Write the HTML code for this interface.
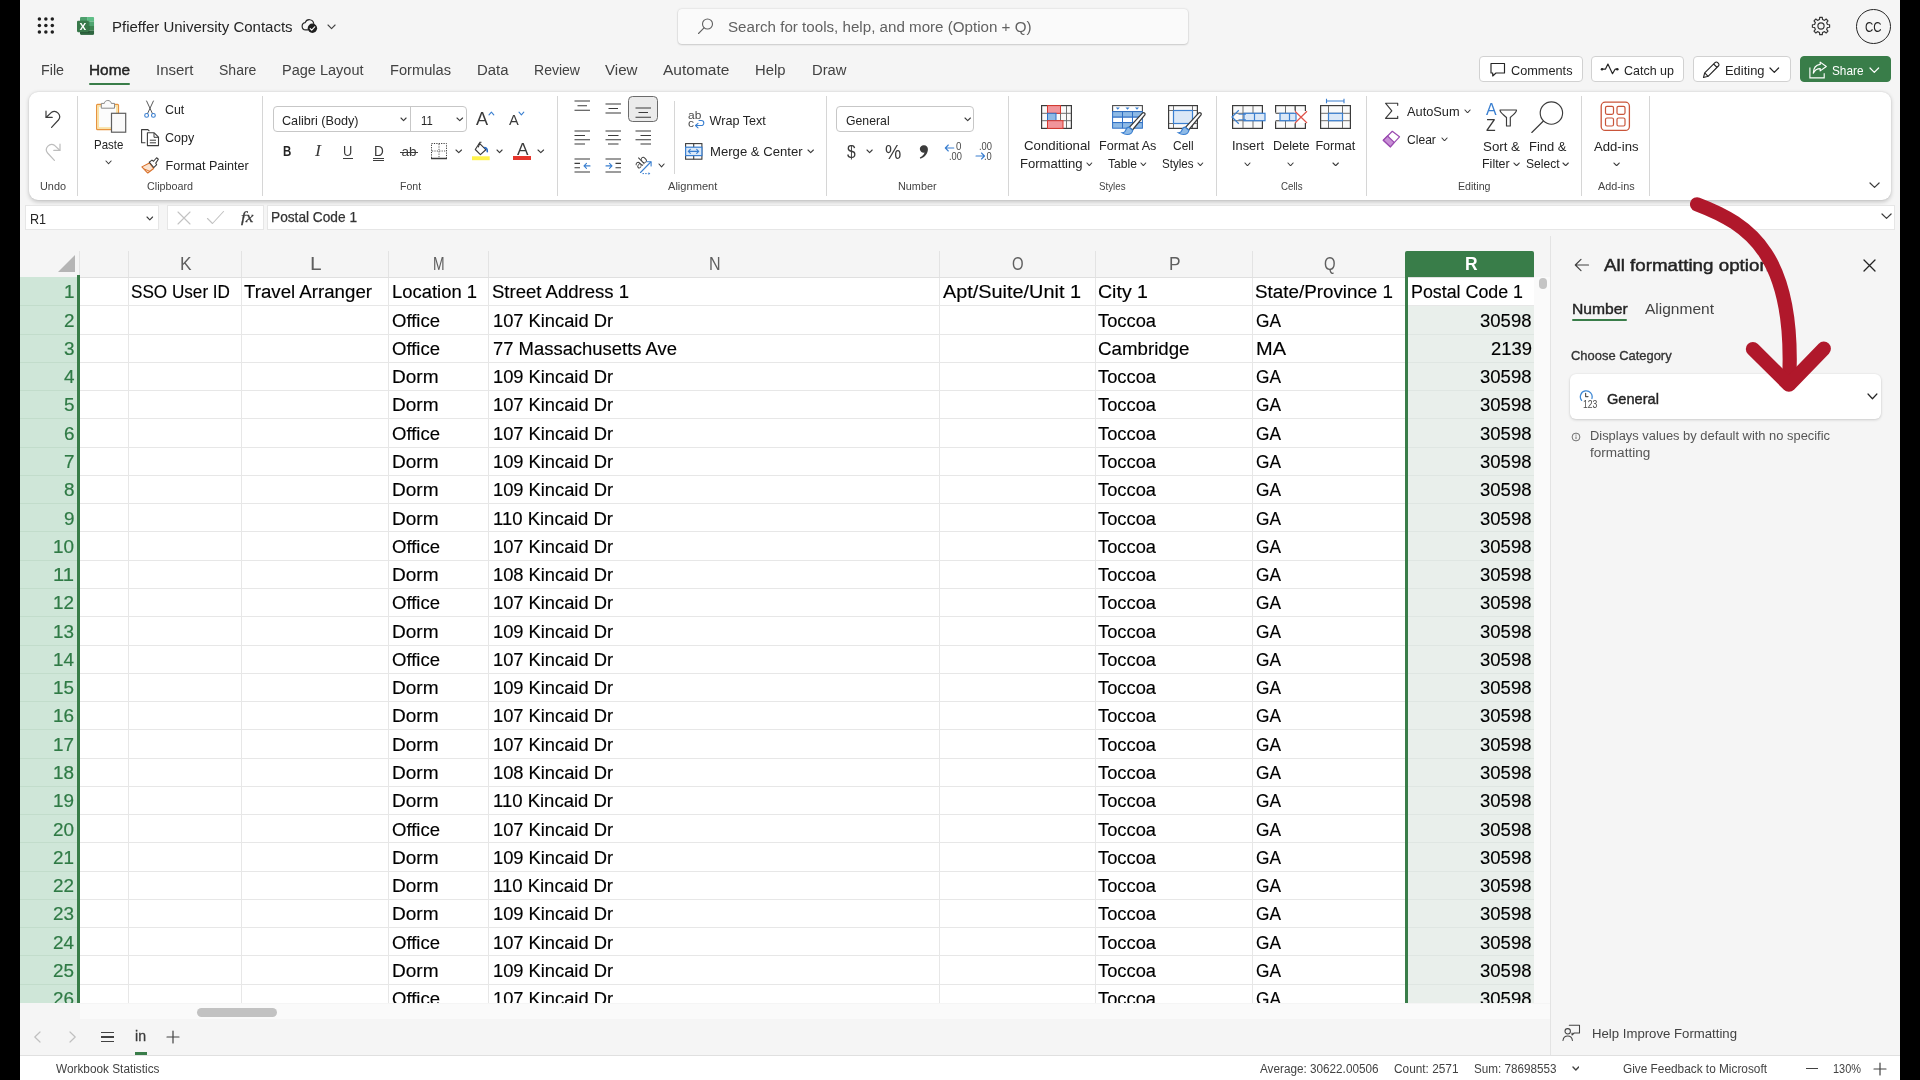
<!DOCTYPE html>
<html lang="en"><head><meta charset="utf-8"><title>Pfieffer University Contacts - Excel</title>
<style>
html,body{margin:0;padding:0;}
body{width:1920px;height:1080px;overflow:hidden;background:#f5f5f5;position:relative;font-family:"Liberation Sans",sans-serif;}
#app{position:absolute;left:0;top:0;width:1920px;height:1080px;overflow:hidden;will-change:transform;}
.a{position:absolute;box-sizing:border-box;display:block;}
.t{position:absolute;white-space:pre;transform-origin:0 50%;}
.sf{font-family:"Liberation Serif",serif;}
</style></head><body><div id="app">
<div class="a " style="left:0px;top:0px;width:20px;height:1080px;background:#000;"></div>
<div class="a " style="left:1900px;top:0px;width:20px;height:1080px;background:#000;"></div>
<svg class="a" style="left:37px;top:17px;" width="18" height="18" viewBox="0 0 18 18"><circle cx="2.40" cy="1.90" r="1.750" fill="#1f1f1f"/><circle cx="2.40" cy="8.45" r="1.750" fill="#1f1f1f"/><circle cx="2.40" cy="15.00" r="1.750" fill="#1f1f1f"/><circle cx="8.85" cy="1.90" r="1.750" fill="#1f1f1f"/><circle cx="8.85" cy="8.45" r="1.750" fill="#1f1f1f"/><circle cx="8.85" cy="15.00" r="1.750" fill="#1f1f1f"/><circle cx="15.30" cy="1.90" r="1.750" fill="#1f1f1f"/><circle cx="15.30" cy="8.45" r="1.750" fill="#1f1f1f"/><circle cx="15.30" cy="15.00" r="1.750" fill="#1f1f1f"/></svg>
<svg class="a" style="left:76px;top:16px;" width="20" height="20" viewBox="0 0 20 20">
<clipPath id="xlc"><rect x="4" y="1" width="14.200" height="17.900" rx="1.300"/></clipPath>
<g clip-path="url(#xlc)">
<rect x="4" y="1" width="7.100" height="4.500" fill="#4d9f6c"/><rect x="11.100" y="1" width="7.100" height="4.500" fill="#5fbe86"/>
<rect x="4" y="5.500" width="7.100" height="4.500" fill="#3c8350"/><rect x="11.100" y="5.500" width="7.100" height="4.500" fill="#4fa570"/>
<rect x="4" y="10" width="7.100" height="4.500" fill="#2f6a41"/><rect x="11.100" y="10" width="7.100" height="4.500" fill="#3d8552"/>
<rect x="4" y="14.500" width="14.200" height="4.400" fill="#2e6640"/>
<rect x="4" y="4.700" width="9.600" height="12.300" fill="#000" opacity="0.18"/>
</g>
<rect x="1" y="4.700" width="11.700" height="11.500" rx="1.100" fill="#38784a"/>
<path d="M3.700 7.100h1.750l1.450 2.450 1.500-2.450h1.650L7.800 10.400l2.300 3.500H8.300L6.850 11.500 5.400 13.900H3.650L5.950 10.400z" fill="#fff"/>
</svg>
<span class="t" style="left:112.00px;top:19px;font-size:15px;line-height:15px;color:#242424;">Pfieffer University Contacts</span>
<svg class="a" style="left:301px;top:18px;" width="18" height="16" viewBox="0 0 18 16">
<path d="M6.800 11.900H4.600A3.650 3.650 0 0 1 4.200 4.650A4.400 4.400 0 0 1 12.700 5.400" fill="none" stroke="#242424" stroke-width="1.150" stroke-linecap="round" stroke-linejoin="round"/>
<circle cx="11.400" cy="10.200" r="4.700" fill="#1f1f1f"/>
<path d="M9.200 10.600l1.500 1.500 3-3.300" fill="none" stroke="#fff" stroke-width="1.150" stroke-linecap="round" stroke-linejoin="round"/>
</svg>
<svg class="a" style="left:327.05px;top:24.0px;" width="9.1" height="5.55" viewBox="0 0 9.1 5.55"><path d="M1 1 L4.55 4.55 L8.10 1" fill="none" stroke="#424242" stroke-width="1.1" stroke-linecap="round" stroke-linejoin="round"/></svg>
<div class="a " style="left:678px;top:9px;width:510px;height:35px;background:#fafafa;border-radius:4px;box-shadow:0 0 2px rgba(0,0,0,.18),0 1px 2px rgba(0,0,0,.14);"></div>
<svg class="a" style="left:697px;top:17px;" width="18" height="18" viewBox="0 0 18 18"><circle cx="10.5" cy="7" r="5" fill="none" stroke="#616161" stroke-width="1.1"/><path d="M7 10.8 L1.5 16.5" stroke="#616161" stroke-width="1.1" stroke-linecap="round"/></svg>
<span class="t" style="left:728.30px;top:19px;font-size:15.5px;line-height:15.5px;color:#616161;transform:scaleX(0.9772);">Search for tools, help, and more (Option + Q)</span>
<svg class="a" style="left:1811px;top:16px;" width="20" height="20" viewBox="0 0 20 20"><g fill="none" stroke="#333" stroke-width="1.15" stroke-linejoin="round"><path d="M16.43 8.50 L18.60 8.70 L18.60 11.30 L16.43 11.50 L15.61 13.48 L17.00 15.16 L15.16 17.00 L13.48 15.61 L11.50 16.43 L11.30 18.60 L8.70 18.60 L8.50 16.43 L6.52 15.61 L4.84 17.00 L3.00 15.16 L4.39 13.48 L3.57 11.50 L1.40 11.30 L1.40 8.70 L3.57 8.50 L4.39 6.52 L3.00 4.84 L4.84 3.00 L6.52 4.39 L8.50 3.57 L8.70 1.40 L11.30 1.40 L11.50 3.57 L13.48 4.39 L15.16 3.00 L17.00 4.84 L15.61 6.52 Z"/><circle cx="10" cy="10" r="3.1"/></g></svg>
<div class="a " style="left:1856px;top:9px;width:35px;height:35px;border:1.4px solid #242424;border-radius:50%;"></div>
<span class="t" style="left:1865.00px;top:20px;font-size:14px;line-height:14px;color:#242424;transform:scaleX(0.8154);">CC</span>
<span class="t" style="left:41.00px;top:62px;font-size:15.5px;line-height:15.5px;color:#424242;transform:scaleX(0.9206);">File</span>
<span class="t" style="left:89.00px;top:62px;font-size:15.5px;line-height:15.5px;color:#242424;-webkit-text-stroke:0.45px #242424;transform:scaleX(0.9913);">Home</span>
<span class="t" style="left:155.50px;top:62px;font-size:15.5px;line-height:15.5px;color:#424242;transform:scaleX(0.9674);">Insert</span>
<span class="t" style="left:218.60px;top:62px;font-size:15.5px;line-height:15.5px;color:#424242;transform:scaleX(0.9039);">Share</span>
<span class="t" style="left:282.00px;top:62px;font-size:15.5px;line-height:15.5px;color:#424242;transform:scaleX(0.9363);">Page Layout</span>
<span class="t" style="left:390.00px;top:62px;font-size:15.5px;line-height:15.5px;color:#424242;transform:scaleX(0.9441);">Formulas</span>
<span class="t" style="left:476.50px;top:62px;font-size:15.5px;line-height:15.5px;color:#424242;transform:scaleX(0.9618);">Data</span>
<span class="t" style="left:533.50px;top:62px;font-size:15.5px;line-height:15.5px;color:#424242;transform:scaleX(0.9050);">Review</span>
<span class="t" style="left:605.00px;top:62px;font-size:15.5px;line-height:15.5px;color:#424242;transform:scaleX(0.9752);">View</span>
<span class="t" style="left:663.00px;top:62px;font-size:15.5px;line-height:15.5px;color:#424242;">Automate</span>
<span class="t" style="left:755.00px;top:62px;font-size:15.5px;line-height:15.5px;color:#424242;transform:scaleX(0.9564);">Help</span>
<span class="t" style="left:811.50px;top:62px;font-size:15.5px;line-height:15.5px;color:#424242;transform:scaleX(0.9538);">Draw</span>
<div class="a " style="left:89px;top:82.5px;width:41px;height:2.5px;background:#397d49;border-radius:1.5px;"></div>
<div class="a " style="left:1479px;top:56.3px;width:103.5px;height:26.1px;background:#fff;border:1px solid #d1d1d1;border-radius:4px;"></div>
<div class="a " style="left:1591px;top:56.3px;width:92.5px;height:26.1px;background:#fff;border:1px solid #d1d1d1;border-radius:4px;"></div>
<div class="a " style="left:1693px;top:56.3px;width:98px;height:26.1px;background:#fff;border:1px solid #d1d1d1;border-radius:4px;"></div>
<div class="a " style="left:1800px;top:56.3px;width:91px;height:26.1px;background:#397d49;border:1px solid #397d49;border-radius:4px;"></div>
<svg class="a" style="left:1489px;top:61px;" width="18" height="18" viewBox="0 0 18 18"><path d="M2 2.5h13.5v9.5H7l-3.3 3v-3H2z" fill="none" stroke="#242424" stroke-width="1.15" stroke-linejoin="round"/></svg>
<span class="t" style="left:1511.00px;top:64px;font-size:13.5px;line-height:13.5px;color:#242424;transform:scaleX(0.9423);">Comments</span>
<svg class="a" style="left:1599px;top:62px;" width="21" height="16" viewBox="0 0 21 16"><path d="M3.400 7.200h3l2.500-5.100 4.600 9.600 2.600-4.500h1.800" fill="none" stroke="#242424" stroke-width="1.200" stroke-linecap="round" stroke-linejoin="round"/><circle cx="3" cy="7.200" r="1.250" fill="#242424"/><circle cx="18.300" cy="7.200" r="1.250" fill="#242424"/></svg>
<span class="t" style="left:1623.50px;top:64px;font-size:13.5px;line-height:13.5px;color:#242424;transform:scaleX(0.9251);">Catch up</span>
<svg class="a" style="left:1701px;top:60px;" width="20" height="20" viewBox="0 0 20 20"><path d="M2.5 17.5l1.2-4.6L14 2.6a1.9 1.9 0 0 1 2.7 0l.7.7a1.9 1.9 0 0 1 0 2.7L7.1 16.3z M12.6 4l3.4 3.4 M3.7 12.9l3.4 3.4" fill="none" stroke="#242424" stroke-width="1.1" stroke-linejoin="round" stroke-linecap="round"/></svg>
<span class="t" style="left:1724.50px;top:64px;font-size:13.5px;line-height:13.5px;color:#242424;transform:scaleX(0.9569);">Editing</span>
<svg class="a" style="left:1769.45px;top:66.8px;" width="10.6" height="6.45" viewBox="0 0 10.6 6.45"><path d="M1 1 L5.30 5.45 L9.60 1" fill="none" stroke="#242424" stroke-width="1.2" stroke-linecap="round" stroke-linejoin="round"/></svg>
<svg class="a" style="left:1809px;top:60px;" width="20" height="20" viewBox="0 0 20 20"><path d="M0.900 7.600V17.800H15.200V13.200" fill="none" stroke="#fff" stroke-width="1.150" stroke-linejoin="miter"/><path d="M11.200 2.100L17.300 6.500 11.200 10.900V8.600C8 8.600 5.800 10 4.300 13.200 4.400 8.500 7 5 11.200 4.400z" fill="none" stroke="#fff" stroke-width="1.150" stroke-linejoin="round"/></svg>
<span class="t" style="left:1832.00px;top:64px;font-size:13.5px;line-height:13.5px;color:#fff;transform:scaleX(0.8742);">Share</span>
<svg class="a" style="left:1868.95px;top:66.8px;" width="10.6" height="6.45" viewBox="0 0 10.6 6.45"><path d="M1 1 L5.30 5.45 L9.60 1" fill="none" stroke="#fff" stroke-width="1.2" stroke-linecap="round" stroke-linejoin="round"/></svg>
<div class="a " style="left:28.5px;top:91.5px;width:1862.5px;height:108px;background:#fff;border-radius:9px;box-shadow:0 1.5px 4px rgba(0,0,0,.2),0 0 2px rgba(0,0,0,.1);"></div>
<div class="a " style="left:77.0px;top:96px;width:1px;height:100px;background:#d6d6d6;"></div>
<div class="a " style="left:262.1px;top:96px;width:1px;height:100px;background:#d6d6d6;"></div>
<div class="a " style="left:557.1px;top:96px;width:1px;height:100px;background:#d6d6d6;"></div>
<div class="a " style="left:826.1px;top:96px;width:1px;height:100px;background:#d6d6d6;"></div>
<div class="a " style="left:1007.9px;top:96px;width:1px;height:100px;background:#d6d6d6;"></div>
<div class="a " style="left:1215.8px;top:96px;width:1px;height:100px;background:#d6d6d6;"></div>
<div class="a " style="left:1366.1px;top:96px;width:1px;height:100px;background:#d6d6d6;"></div>
<div class="a " style="left:1581.1px;top:96px;width:1px;height:100px;background:#d6d6d6;"></div>
<div class="a " style="left:1649.0px;top:96px;width:1px;height:100px;background:#d6d6d6;"></div>
<div class="a " style="left:673.5px;top:100.5px;width:1px;height:73px;background:#d6d6d6;"></div>
<svg class="a" style="left:44px;top:109px;" width="18" height="20" viewBox="0 0 18 20"><path d="M2 2.2v6.2h6.2" fill="none" stroke="#3b3b3b" stroke-width="1.2" stroke-linecap="round" stroke-linejoin="round"/><path d="M2.3 8.2 L7.2 3.6 a5.2 5.2 0 0 1 7.2 7.4 L7.6 18.4" fill="none" stroke="#3b3b3b" stroke-width="1.2" stroke-linecap="round" stroke-linejoin="round"/></svg>
<svg class="a" style="left:44px;top:141.5px;" width="18" height="20" viewBox="0 0 18 20"><g transform="translate(18,0) scale(-1,1)"><path d="M2 2.2v6.2h6.2" fill="none" stroke="#bdbdbd" stroke-width="1.2" stroke-linecap="round" stroke-linejoin="round"/><path d="M2.3 8.2 L7.2 3.6 a5.2 5.2 0 0 1 7.2 7.4 L7.6 18.4" fill="none" stroke="#bdbdbd" stroke-width="1.2" stroke-linecap="round" stroke-linejoin="round"/></g></svg>
<span class="t" style="left:40.00px;top:181px;font-size:11.5px;line-height:11.5px;color:#444;transform:scaleX(0.9455);">Undo</span>
<svg class="a" style="left:95px;top:99px;" width="33" height="35" viewBox="0 0 33 35">
<rect x="1.700" y="5.500" width="21.700" height="25" rx="0.800" fill="#fcfcfc" stroke="#e7933f" stroke-width="1.400"/>
<rect x="3.200" y="7" width="18.700" height="22" fill="none" stroke="#fae2a4" stroke-width="1.700"/>
<path d="M6.300 9.200V4.400h3c.2-1.800 1.600-2.900 3.500-2.900s3.300 1.100 3.500 2.900h3.200v4.800z" fill="#fafafa" stroke="#8a8a8a" stroke-width="1"/>
<rect x="16.500" y="14.300" width="14.200" height="18.900" fill="#fafafa" stroke="#5e5e5e" stroke-width="1.200"/>
</svg>
<span class="t" style="left:93.80px;top:139px;font-size:12.6px;line-height:12.6px;color:#242424;transform:scaleX(0.9125);">Paste</span>
<svg class="a" style="left:105.45px;top:160.3px;" width="7.1" height="4.75" viewBox="0 0 7.1 4.75"><path d="M1 1 L3.55 3.75 L6.10 1" fill="none" stroke="#3b3b3b" stroke-width="1.1" stroke-linecap="round" stroke-linejoin="round"/></svg>
<svg class="a" style="left:143px;top:100px;" width="14" height="19" viewBox="0 0 14 19"><path d="M3.6 1 L9.400 13.500 M10.400 1 L4.600 13.500" stroke="#505050" stroke-width="0.950" stroke-linecap="round" fill="none"/><circle cx="3.6" cy="15.400" r="1.900" fill="none" stroke="#3a7fd0" stroke-width="1.100"/><circle cx="10.400" cy="15.400" r="1.900" fill="none" stroke="#3a7fd0" stroke-width="1.100"/></svg>
<span class="t" style="left:165.20px;top:104px;font-size:12.6px;line-height:12.6px;color:#242424;transform:scaleX(0.9842);">Cut</span>
<svg class="a" style="left:140px;top:128px;" width="20" height="19" viewBox="0 0 20 19"><path d="M5.400 14.800H1.600V1.600h6.300l1.500 1.500" fill="none" stroke="#3b3b3b" stroke-width="1.100" stroke-linejoin="round"/><path d="M7.400 4.800h6.800l4.300 4.300v8.500H7.400z" fill="#fff" stroke="#3b3b3b" stroke-width="1.100" stroke-linejoin="round"/><path d="M14 5v4.300h4.300" fill="none" stroke="#3b3b3b" stroke-width="1"/><path d="M9.800 12.200h6.200M9.800 14.800h6.200" stroke="#3b3b3b" stroke-width="1"/></svg>
<span class="t" style="left:165.20px;top:132px;font-size:12.6px;line-height:12.6px;color:#242424;transform:scaleX(0.9930);">Copy</span>
<svg class="a" style="left:140px;top:156px;" width="21" height="19" viewBox="0 0 21 19"><g transform="translate(0.400,0.300) scale(0.920)">
<path d="M1.600 11.500l8.200-4.300 4.600 6-6.400 5z" fill="#fbe3cf" stroke="#d8702a" stroke-width="1.200" stroke-linejoin="round"/>
<path d="M4.200 13.800l6.300 2.600" stroke="#d8702a" stroke-width="1" fill="none"/>
<path d="M9.600 6.400l3-2.300 1.700 1.300 3.300-3.800 1.900 1.600-2.800 4.200 1 1.700-3.200 3.100z" fill="#fff" stroke="#3b3b3b" stroke-width="1.150" stroke-linejoin="round"/></g>
</svg>
<span class="t" style="left:165.50px;top:160px;font-size:12.6px;line-height:12.6px;color:#242424;">Format Painter</span>
<span class="t" style="left:146.90px;top:181px;font-size:11.5px;line-height:11.5px;color:#444;transform:scaleX(0.9363);">Clipboard</span>
<div class="a " style="left:272.5px;top:106.4px;width:194px;height:25.4px;background:#fff;border:1px solid #c7c7c7;border-radius:4px;"></div>
<div class="a " style="left:410px;top:107px;width:1px;height:24px;background:#c7c7c7;"></div>
<span class="t" style="left:281.90px;top:114px;font-size:13px;line-height:13px;color:#242424;transform:scaleX(0.9714);">Calibri (Body)</span>
<svg class="a" style="left:400.45px;top:117.1px;" width="7.1" height="4.65" viewBox="0 0 7.1 4.65"><path d="M1 1 L3.55 3.65 L6.10 1" fill="none" stroke="#3b3b3b" stroke-width="1.1" stroke-linecap="round" stroke-linejoin="round"/></svg>
<span class="t" style="left:421.00px;top:114px;font-size:13px;line-height:13px;color:#242424;transform:scaleX(0.8667);">11</span>
<svg class="a" style="left:455.95px;top:117.1px;" width="7.6" height="4.65" viewBox="0 0 7.6 4.65"><path d="M1 1 L3.80 3.65 L6.60 1" fill="none" stroke="#3b3b3b" stroke-width="1.1" stroke-linecap="round" stroke-linejoin="round"/></svg>
<span class="t" style="left:476.40px;top:110px;font-size:18.5px;line-height:18.5px;color:#3b3b3b;transform:scaleX(0.9803);">A</span>
<svg class="a" style="left:487.5px;top:110.5px;" width="7" height="5" viewBox="0 0 7 5"><path d="M1 3.800 L3.400 1.200 L5.800 3.800" fill="none" stroke="#3a7fd0" stroke-width="1.100" stroke-linecap="round" stroke-linejoin="round"/></svg>
<span class="t" style="left:508.75px;top:113px;font-size:14.5px;line-height:14.5px;color:#3b3b3b;transform:scaleX(1.0081);">A</span>
<svg class="a" style="left:517.5px;top:111px;" width="7" height="5" viewBox="0 0 7 5"><path d="M1 1.200 L3.400 3.800 L5.800 1.200" fill="none" stroke="#3a7fd0" stroke-width="1.100" stroke-linecap="round" stroke-linejoin="round"/></svg>
<span class="t" style="left:283.40px;top:144px;font-size:14.5px;line-height:14.5px;font-weight:700;color:#242424;transform:scaleX(0.7917);">B</span>
<span class="t sf" style="left:315.00px;top:143px;font-size:16px;line-height:16px;font-style:italic;color:#3b3b3b;transform:scaleX(1.1261);">I</span>
<span class="t" style="left:343.30px;top:144px;font-size:14.5px;line-height:14.5px;color:#3b3b3b;transform:scaleX(0.8870);">U</span>
<div class="a " style="left:342.8px;top:157.5px;width:10.3px;height:1.1px;background:#3b3b3b;"></div>
<span class="t" style="left:373.80px;top:144px;font-size:14.5px;line-height:14.5px;color:#3b3b3b;transform:scaleX(0.9347);">D</span>
<div class="a " style="left:373px;top:157.5px;width:11.2px;height:1px;background:#3b3b3b;"></div>
<div class="a " style="left:373px;top:159.6px;width:11.2px;height:1px;background:#3b3b3b;"></div>
<span class="t" style="left:401.50px;top:145px;font-size:13.5px;line-height:13.5px;color:#3b3b3b;">ab</span>
<div class="a " style="left:400px;top:151.8px;width:18px;height:1px;background:#3b3b3b;"></div>
<svg class="a" style="left:430px;top:142px;" width="18" height="18" viewBox="0 0 18 18"><rect x="1.5" y="1.500" width="15" height="15" fill="none" stroke="#3b3b3b" stroke-width="1" stroke-dasharray="1.200 1.200"/><path d="M9 2v14M2 9h14" stroke="#5a5a5a" stroke-width="1" stroke-dasharray="1.200 1.200"/><path d="M1 16.500h16" stroke="#3b3b3b" stroke-width="1.500"/></svg>
<svg class="a" style="left:455.05px;top:149.1px;" width="7.5" height="4.65" viewBox="0 0 7.5 4.65"><path d="M1 1 L3.75 3.65 L6.50 1" fill="none" stroke="#3b3b3b" stroke-width="1.1" stroke-linecap="round" stroke-linejoin="round"/></svg>
<svg class="a" style="left:472px;top:141px;" width="18" height="20" viewBox="0 0 18 20"><path d="M7.300 2.200 L13.800 8.700 L8.400 13.600 L3.300 8.500 Z" fill="#fff" stroke="#3b3b3b" stroke-width="1.150" stroke-linejoin="round"/><path d="M6.300 6.300 L7.900 1.300 h1.600" fill="none" stroke="#3b3b3b" stroke-width="1.100"/><path d="M12.700 6.600c1.700.2 2.700 1.600 2.600 4.200" fill="none" stroke="#2b6cc4" stroke-width="1.600" stroke-linecap="round"/><rect x="0" y="15.300" width="17.700" height="3.900" fill="#fff34a"/></svg>
<svg class="a" style="left:496.45px;top:149.1px;" width="7.1" height="4.65" viewBox="0 0 7.1 4.65"><path d="M1 1 L3.55 3.65 L6.10 1" fill="none" stroke="#3b3b3b" stroke-width="1.1" stroke-linecap="round" stroke-linejoin="round"/></svg>
<span class="t" style="left:516.50px;top:141px;font-size:16.5px;line-height:16.5px;color:#3b3b3b;transform:scaleX(1.0440);">A</span>
<div class="a " style="left:513.4px;top:156.3px;width:17.6px;height:3.9px;background:#e5352c;"></div>
<svg class="a" style="left:537.45px;top:149.1px;" width="7.6" height="4.65" viewBox="0 0 7.6 4.65"><path d="M1 1 L3.80 3.65 L6.60 1" fill="none" stroke="#3b3b3b" stroke-width="1.1" stroke-linecap="round" stroke-linejoin="round"/></svg>
<span class="t" style="left:399.50px;top:181px;font-size:11.5px;line-height:11.5px;color:#444;transform:scaleX(0.9168);">Font</span>
<svg class="a" style="left:573.8px;top:99px;" width="16.5" height="13.299999999999997" viewBox="0 0 16.5 13.299999999999997"><path d="M0.50 2.00h15.50M3.50 6.80h9.50M0.50 11.30h15.50" stroke="#3b3b3b" stroke-width="1.050" fill="none"/></svg>
<svg class="a" style="left:604.5px;top:102.3px;" width="16.5" height="13.100000000000009" viewBox="0 0 16.5 13.100000000000009"><path d="M0.50 2.00h15.50M3.50 6.60h9.50M0.50 11.10h15.50" stroke="#3b3b3b" stroke-width="1.050" fill="none"/></svg>
<div class="a " style="left:628.4px;top:96px;width:29.4px;height:25.6px;background:#ebebeb;border:1px solid #6b6b6b;border-radius:4.500px;"></div>
<svg class="a" style="left:634.7px;top:106.4px;" width="16.5" height="13.199999999999989" viewBox="0 0 16.5 13.199999999999989"><path d="M0.50 2.00h15.50M3.50 6.60h9.50M0.50 11.20h15.50" stroke="#3b3b3b" stroke-width="1.050" fill="none"/></svg>
<svg class="a" style="left:573.8px;top:128.6px;" width="16.5" height="17.0" viewBox="0 0 16.5 17.0"><path d="M0.50 2.00h15.50M0.50 6.40h10.50M0.50 10.70h15.50M0.50 15.00h10.50" stroke="#3b3b3b" stroke-width="1.050" fill="none"/></svg>
<svg class="a" style="left:604.5px;top:128.6px;" width="16.5" height="17.0" viewBox="0 0 16.5 17.0"><path d="M0.50 2.00h15.50M3.00 6.40h10.50M0.50 10.70h15.50M3.00 15.00h10.50" stroke="#3b3b3b" stroke-width="1.050" fill="none"/></svg>
<svg class="a" style="left:634.7px;top:128.6px;" width="16.5" height="17.0" viewBox="0 0 16.5 17.0"><path d="M0.50 2.00h15.50M5.50 6.40h10.50M0.50 10.70h15.50M5.50 15.00h10.50" stroke="#3b3b3b" stroke-width="1.050" fill="none"/></svg>
<svg class="a" style="left:573.8px;top:156.8px;" width="16.5" height="17.099999999999994" viewBox="0 0 16.5 17.099999999999994"><path d="M0.50 2.00h15.50M0.50 6.40h5.50M0.50 10.70h5.50M0.50 15.10h15.50" stroke="#3b3b3b" stroke-width="1.050" fill="none"/></svg>
<svg class="a" style="left:583px;top:160.5px;" width="8" height="10" viewBox="0 0 8 10"><path d="M7 4.900H1.200M3.500 2.400L1 4.900l2.500 2.500" fill="none" stroke="#3a7fd0" stroke-width="1.100" stroke-linecap="round" stroke-linejoin="round"/></svg>
<svg class="a" style="left:604.5px;top:156.8px;" width="16.5" height="17.099999999999994" viewBox="0 0 16.5 17.099999999999994"><path d="M0.50 2.00h15.50M10.50 6.40h5.50M10.50 10.70h5.50M0.50 15.10h15.50" stroke="#3b3b3b" stroke-width="1.050" fill="none"/></svg>
<svg class="a" style="left:604.5px;top:160.5px;" width="8" height="10" viewBox="0 0 8 10"><path d="M1 4.900h5.800M4.500 2.400L7 4.900l-2.500 2.500" fill="none" stroke="#3a7fd0" stroke-width="1.100" stroke-linecap="round" stroke-linejoin="round"/></svg>
<span class="t" style="left:633.5px;top:155.500px;font-size:12px;line-height:12px;color:#3b3b3b;transform:rotate(-45deg);transform-origin:50% 50%;">ab</span>
<svg class="a" style="left:638px;top:160px;" width="16" height="15" viewBox="0 0 16 15"><path d="M2.500 12.500 L12.800 2" stroke="#3a7fd0" stroke-width="1.100" fill="none" stroke-linecap="round"/><path d="M8.800 1.700h4.300v4.300" stroke="#3a7fd0" stroke-width="1.100" fill="none" stroke-linecap="round" stroke-linejoin="round"/><path d="M4.500 13.600h6" stroke="#3a7fd0" stroke-width="1" stroke-dasharray="1.500 1.200" fill="none"/><path d="M10.500 12.200l1.800 1.400-1.800 1.400z" fill="#3a7fd0"/></svg>
<svg class="a" style="left:658.45px;top:163.1px;" width="7.1" height="4.85" viewBox="0 0 7.1 4.85"><path d="M1 1 L3.55 3.85 L6.10 1" fill="none" stroke="#3b3b3b" stroke-width="1.1" stroke-linecap="round" stroke-linejoin="round"/></svg>
<span class="t" style="left:687.70px;top:110px;font-size:11.5px;line-height:11.5px;color:#4a4a4a;transform:scaleX(1.0393);">ab</span>
<span class="t" style="left:688.00px;top:118px;font-size:11.5px;line-height:11.5px;color:#4a4a4a;transform:scaleX(1.0435);">c</span>
<svg class="a" style="left:693.5px;top:118.5px;" width="11" height="11" viewBox="0 0 11 11"><path d="M5 1.500h2.300a2.500 2.500 0 0 1 0 5H1.800" fill="none" stroke="#3a7fd0" stroke-width="1.100" stroke-linecap="round"/><path d="M4 4.300L1.500 6.500 4 8.800" fill="none" stroke="#3a7fd0" stroke-width="1.100" stroke-linecap="round" stroke-linejoin="round"/></svg>
<span class="t" style="left:709.60px;top:115px;font-size:12.6px;line-height:12.6px;color:#242424;">Wrap Text</span>
<svg class="a" style="left:685px;top:142.5px;" width="18" height="17" viewBox="0 0 18 17"><rect x="0.600" y="0.600" width="16.300" height="15.600" fill="#fff" stroke="#3b3b3b" stroke-width="1.100"/><path d="M8.700 0.600v3.600M8.700 12.600v3.600" stroke="#3b3b3b" stroke-width="1.100"/><rect x="0.600" y="4.200" width="16.300" height="8.400" fill="#dbe9f8" stroke="#3a7fd0" stroke-width="1.200"/><path d="M3.300 8.400h10.400M5.300 6.400l-2 2 2 2M11.700 6.400l2 2-2 2" fill="none" stroke="#3a7fd0" stroke-width="1.100" stroke-linecap="round" stroke-linejoin="round"/></svg>
<span class="t" style="left:709.60px;top:146px;font-size:12.6px;line-height:12.6px;color:#242424;transform:scaleX(1.0415);">Merge &amp; Center</span>
<svg class="a" style="left:807.15px;top:149.3px;" width="7.4" height="4.65" viewBox="0 0 7.4 4.65"><path d="M1 1 L3.70 3.65 L6.40 1" fill="none" stroke="#3b3b3b" stroke-width="1.1" stroke-linecap="round" stroke-linejoin="round"/></svg>
<span class="t" style="left:667.60px;top:181px;font-size:11.5px;line-height:11.5px;color:#444;transform:scaleX(0.9640);">Alignment</span>
<div class="a " style="left:836.4px;top:106.2px;width:138.1px;height:25.4px;background:#fff;border:1px solid #c7c7c7;border-radius:4px;"></div>
<span class="t" style="left:845.90px;top:114px;font-size:13px;line-height:13px;color:#242424;transform:scaleX(0.9427);">General</span>
<svg class="a" style="left:964.15px;top:117.1px;" width="7.4" height="4.65" viewBox="0 0 7.4 4.65"><path d="M1 1 L3.70 3.65 L6.40 1" fill="none" stroke="#3b3b3b" stroke-width="1.1" stroke-linecap="round" stroke-linejoin="round"/></svg>
<span class="t" style="left:846.60px;top:143px;font-size:18.5px;line-height:18.5px;color:#3b3b3b;transform:scaleX(0.8449);">$</span>
<svg class="a" style="left:866.35px;top:149.1px;" width="7.2" height="4.65" viewBox="0 0 7.2 4.65"><path d="M1 1 L3.60 3.65 L6.20 1" fill="none" stroke="#3b3b3b" stroke-width="1.1" stroke-linecap="round" stroke-linejoin="round"/></svg>
<span class="t" style="left:884.50px;top:143px;font-size:19.5px;line-height:19.5px;color:#3b3b3b;transform:scaleX(0.9398);">%</span>
<svg class="a" style="left:917px;top:143px;" width="13" height="18" viewBox="0 0 13 18"><path d="M7.200 2.300a3.700 3.700 0 0 1 3.700 3.900c0 4.300-3 7.800-7.500 9.500l-.6-1.100c2.600-1.300 4.300-3 4.700-5.100a3.700 3.700 0 1 1-.3-7.200z" fill="#3b3b3b"/></svg>
<span class="t" style="left:956.00px;top:142px;font-size:10px;line-height:10px;color:#4a4a4a;transform:scaleX(0.9708);">0</span>
<span class="t" style="left:948.50px;top:152px;font-size:10px;line-height:10px;color:#4a4a4a;transform:scaleX(0.9276);">.00</span>
<svg class="a" style="left:944px;top:144px;" width="11" height="8" viewBox="0 0 11 8"><path d="M9.800 4H1.300M4.300 1L1.300 4l3 3" fill="none" stroke="#3a7fd0" stroke-width="1.100" stroke-linecap="round" stroke-linejoin="round"/></svg>
<span class="t" style="left:979.00px;top:142px;font-size:10px;line-height:10px;color:#4a4a4a;transform:scaleX(0.9348);">.00</span>
<span class="t" style="left:984.20px;top:152px;font-size:10px;line-height:10px;color:#4a4a4a;transform:scaleX(0.9348);">.0</span>
<svg class="a" style="left:974.5px;top:152px;" width="11" height="8" viewBox="0 0 11 8"><path d="M1 4h8.500M6.500 1l3 3-3 3" fill="none" stroke="#3a7fd0" stroke-width="1.100" stroke-linecap="round" stroke-linejoin="round"/></svg>
<span class="t" style="left:898.40px;top:181px;font-size:11.5px;line-height:11.5px;color:#444;transform:scaleX(0.9436);">Number</span>
<svg class="a" style="left:1041px;top:104.7px;" width="31" height="24" viewBox="0 0 31 24"><rect x="0.6" y="0.600" width="29.8" height="22.8" fill="#fafafa" stroke="#3b3b3b" stroke-width="1.200"/><path d="M6.5 1v22" stroke="#6e6e6e" stroke-width="1"/><path d="M19.5 1v22" stroke="#6e6e6e" stroke-width="1"/><path d="M25.5 1v22" stroke="#6e6e6e" stroke-width="1"/><path d="M1 8.3h29" stroke="#6e6e6e" stroke-width="1"/><path d="M1 15.7h29" stroke="#6e6e6e" stroke-width="1"/><rect x="6.500" y="0.600" width="13" height="7.700" fill="#f1959b" stroke="#d9382e" stroke-width="1"/><rect x="6.500" y="8.300" width="8.500" height="7.400" fill="#8ebae6" stroke="#2f6fc4" stroke-width="1"/><rect x="6.500" y="15.700" width="15.500" height="7.700" fill="#f1959b" stroke="#d9382e" stroke-width="1"/></svg>
<span class="t" style="left:1023.75px;top:140px;font-size:12.6px;line-height:12.6px;color:#242424;transform:scaleX(1.0513);">Conditional</span>
<span class="t" style="left:1020.25px;top:158px;font-size:12.6px;line-height:12.6px;color:#242424;transform:scaleX(1.0382);">Formatting</span>
<svg class="a" style="left:1086.35px;top:161.7px;" width="6.7" height="4.55" viewBox="0 0 6.7 4.55"><path d="M1 1 L3.35 3.55 L5.70 1" fill="none" stroke="#3b3b3b" stroke-width="1.1" stroke-linecap="round" stroke-linejoin="round"/></svg>
<svg class="a" style="left:1112px;top:104.7px;" width="36" height="33" viewBox="0 0 36 33"><rect x="0.600" y="0.600" width="29.800" height="6" fill="#fff" stroke="#4a4a4a" stroke-width="1.100"/><path d="M3.800 2.400h4l-2 2.400zM13.500 2.400h4l-2 2.400zM23 2.400h4l-2 2.400z" fill="#3a7fd0"/><rect x="0.600" y="6.600" width="29.800" height="5.600" fill="#8ebae6" stroke="#2f6fc4" stroke-width="1"/><rect x="0.600" y="12.200" width="29.800" height="5.400" fill="#fff" stroke="#2f6fc4" stroke-width="1"/><rect x="0.600" y="17.600" width="29.800" height="5.600" fill="#8ebae6" stroke="#2f6fc4" stroke-width="1"/><path d="M10.500 6.600v16.600M20.500 6.600v16.600" stroke="#2f6fc4" stroke-width="1"/><rect x="11.500" y="13" width="22" height="17" fill="#fff" opacity="0"/><g transform="translate(9.6,6.5) scale(1.18)"><path d="M6.500 13.500 L17.800 1.200 a1.300 1.300 0 0 1 1.900 1.700 L9.200 15.700z" fill="#fff" stroke="#3b3b3b" stroke-width="1.100" stroke-linejoin="round"/><path d="M6.300 13.300l3.100 2.600c-.3 2.300-2.300 3.600-4.600 3.600-1.500 0-2.900-.4-4.300-1.400 2 0 2.600-.9 3-2.300.4-1.500 1.400-2.400 2.800-2.500z" fill="#8ebae6" stroke="#3a7fd0" stroke-width="1"/></g></svg>
<span class="t" style="left:1099.00px;top:140px;font-size:12.6px;line-height:12.6px;color:#242424;">Format As</span>
<span class="t" style="left:1107.50px;top:158px;font-size:12.6px;line-height:12.6px;color:#242424;transform:scaleX(0.9632);">Table</span>
<svg class="a" style="left:1140.05px;top:161.7px;" width="6.7" height="4.55" viewBox="0 0 6.7 4.55"><path d="M1 1 L3.35 3.55 L5.70 1" fill="none" stroke="#3b3b3b" stroke-width="1.1" stroke-linecap="round" stroke-linejoin="round"/></svg>
<svg class="a" style="left:1167.7px;top:104.7px;" width="36" height="33" viewBox="0 0 36 33"><rect x="0.6" y="0.600" width="28.8" height="22.8" fill="#fafafa" stroke="#3b3b3b" stroke-width="1.200"/><path d="M5.5 1v22" stroke="#6e6e6e" stroke-width="1"/><path d="M24.5 1v22" stroke="#6e6e6e" stroke-width="1"/><path d="M1 5.5h28" stroke="#6e6e6e" stroke-width="1"/><path d="M1 18.5h28" stroke="#6e6e6e" stroke-width="1"/><rect x="5.500" y="5.500" width="19" height="13" fill="#dbe8f7" stroke="#3a7fd0" stroke-width="1.200"/><g transform="translate(9.8,6.5) scale(1.18)"><path d="M6.500 13.500 L17.800 1.200 a1.300 1.300 0 0 1 1.900 1.700 L9.200 15.700z" fill="#fff" stroke="#3b3b3b" stroke-width="1.100" stroke-linejoin="round"/><path d="M6.300 13.300l3.100 2.600c-.3 2.300-2.300 3.600-4.600 3.600-1.500 0-2.900-.4-4.300-1.400 2 0 2.600-.9 3-2.300.4-1.500 1.400-2.400 2.800-2.500z" fill="#8ebae6" stroke="#3a7fd0" stroke-width="1"/></g></svg>
<span class="t" style="left:1172.50px;top:140px;font-size:12.6px;line-height:12.6px;color:#242424;transform:scaleX(0.9492);">Cell</span>
<span class="t" style="left:1161.60px;top:158px;font-size:12.6px;line-height:12.6px;color:#242424;transform:scaleX(0.9185);">Styles</span>
<svg class="a" style="left:1196.95px;top:161.7px;" width="6.7" height="4.55" viewBox="0 0 6.7 4.55"><path d="M1 1 L3.35 3.55 L5.70 1" fill="none" stroke="#3b3b3b" stroke-width="1.1" stroke-linecap="round" stroke-linejoin="round"/></svg>
<span class="t" style="left:1099.00px;top:181px;font-size:11.5px;line-height:11.5px;color:#444;transform:scaleX(0.8491);">Styles</span>
<svg class="a" style="left:1230px;top:104.7px;" width="36" height="24" viewBox="0 0 36 24"><g transform="translate(2,0)"><rect x="0.6" y="0.600" width="29.8" height="22.8" fill="#fafafa" stroke="#3b3b3b" stroke-width="1.200"/><path d="M11 1v22" stroke="#6e6e6e" stroke-width="1"/><path d="M21 1v22" stroke="#6e6e6e" stroke-width="1"/><path d="M1 8.3h29" stroke="#6e6e6e" stroke-width="1"/><path d="M1 15.7h29" stroke="#6e6e6e" stroke-width="1"/><rect x="12" y="8.300" width="21" height="7.400" fill="#dbe8f7" stroke="#3a7fd0" stroke-width="1.200"/><path d="M22.500 8.300v7.400" stroke="#3a7fd0" stroke-width="1.200"/><path d="M14 9.200H6.500M14 14.800H6.500" stroke="#3a7fd0" stroke-width="1" fill="none"/><path d="M6.800 5.300 L0 12 l6.800 6.700" fill="none" stroke="#3a7fd0" stroke-width="1.200" stroke-linejoin="round"/><path d="M0.500 12H9" stroke="#3a7fd0" stroke-width="0" /></g></svg>
<span class="t" style="left:1231.50px;top:140px;font-size:12.6px;line-height:12.6px;color:#242424;transform:scaleX(1.0159);">Insert</span>
<svg class="a" style="left:1244.2px;top:161.7px;" width="6.95" height="4.75" viewBox="0 0 6.95 4.75"><path d="M1 1 L3.47 3.75 L5.95 1" fill="none" stroke="#3b3b3b" stroke-width="1.1" stroke-linecap="round" stroke-linejoin="round"/></svg>
<svg class="a" style="left:1275px;top:104.7px;" width="34" height="24" viewBox="0 0 34 24"><rect x="0.6" y="0.600" width="29.8" height="22.8" fill="#fafafa" stroke="#3b3b3b" stroke-width="1.200"/><path d="M10.5 1v22" stroke="#6e6e6e" stroke-width="1"/><path d="M20.5 1v22" stroke="#6e6e6e" stroke-width="1"/><path d="M1 8.3h29" stroke="#6e6e6e" stroke-width="1"/><path d="M1 15.7h29" stroke="#6e6e6e" stroke-width="1"/><rect x="-1" y="7.700" width="5.500" height="8.600" fill="#fff"/><rect x="19" y="6" width="13" height="12" fill="#fff"/><path d="M0.600 8.300h4M0.600 15.700h4M20 0.600v5M20 23.400v-5" stroke="#4a4a4a" stroke-width="1" fill="none"/><rect x="5" y="8.300" width="16" height="7.400" fill="#dbe8f7" stroke="#3a7fd0" stroke-width="1.200"/><path d="M14.500 8.300v7.400" stroke="#3a7fd0" stroke-width="1.200"/><path d="M20 6.300l12 11.700M32 6.300L20 18" stroke="#e0544c" stroke-width="1.200" fill="none"/></svg>
<span class="t" style="left:1272.50px;top:140px;font-size:12.6px;line-height:12.6px;color:#242424;transform:scaleX(1.0053);">Delete</span>
<svg class="a" style="left:1287.45px;top:161.7px;" width="7.1" height="4.75" viewBox="0 0 7.1 4.75"><path d="M1 1 L3.55 3.75 L6.10 1" fill="none" stroke="#3b3b3b" stroke-width="1.1" stroke-linecap="round" stroke-linejoin="round"/></svg>
<svg class="a" style="left:1320px;top:104.7px;" width="31" height="24" viewBox="0 0 31 24"><rect x="0.6" y="0.600" width="29.8" height="22.8" fill="#fafafa" stroke="#3b3b3b" stroke-width="1.200"/><path d="M8.5 1v22" stroke="#6e6e6e" stroke-width="1"/><path d="M22.5 1v22" stroke="#6e6e6e" stroke-width="1"/><path d="M1 8.3h29" stroke="#6e6e6e" stroke-width="1"/><path d="M1 15.7h29" stroke="#6e6e6e" stroke-width="1"/><rect x="8.500" y="8.300" width="14" height="7.400" fill="#dbe8f7" stroke="#3a7fd0" stroke-width="1.200"/></svg>
<svg class="a" style="left:1325px;top:98px;" width="21" height="6" viewBox="0 0 21 6"><path d="M1.500 3h17.500M1.500 0.800v4.400M19 0.800v4.400" stroke="#3a7fd0" stroke-width="1.100" fill="none"/></svg>
<span class="t" style="left:1315.40px;top:140px;font-size:12.6px;line-height:12.6px;color:#242424;">Format</span>
<svg class="a" style="left:1332.2px;top:161.7px;" width="7.35" height="4.75" viewBox="0 0 7.35 4.75"><path d="M1 1 L3.67 3.75 L6.35 1" fill="none" stroke="#3b3b3b" stroke-width="1.1" stroke-linecap="round" stroke-linejoin="round"/></svg>
<span class="t" style="left:1280.60px;top:181px;font-size:11.5px;line-height:11.5px;color:#444;transform:scaleX(0.8469);">Cells</span>
<svg class="a" style="left:1383.5px;top:102px;" width="16" height="18" viewBox="0 0 16 18"><path d="M13.700 3.300V1.200H1.500l6.300 7.600-6.300 7.600h12.200v-2.100" fill="none" stroke="#3b3b3b" stroke-width="1.150" stroke-linejoin="round" stroke-linecap="round"/></svg>
<span class="t" style="left:1406.90px;top:106px;font-size:12.6px;line-height:12.6px;color:#242424;transform:scaleX(1.0152);">AutoSum</span>
<svg class="a" style="left:1464.45px;top:108.6px;" width="7.1" height="4.75" viewBox="0 0 7.1 4.75"><path d="M1 1 L3.55 3.75 L6.10 1" fill="none" stroke="#3b3b3b" stroke-width="1.1" stroke-linecap="round" stroke-linejoin="round"/></svg>
<svg class="a" style="left:1381.5px;top:130px;" width="19" height="19" viewBox="0 0 19 19"><path d="M1.300 10.200 L10.300 1.300 L17.500 6.800 L8.300 16.800 Z" fill="#fff" stroke="#9a4bb0" stroke-width="1.200" stroke-linejoin="round"/><path d="M1.300 10.200 L5.600 6 L12.200 12.400 L8.300 16.800 Z" fill="#c88fd6" stroke="#9a4bb0" stroke-width="1.200" stroke-linejoin="round"/></svg>
<span class="t" style="left:1406.90px;top:134px;font-size:12.6px;line-height:12.6px;color:#242424;transform:scaleX(0.9598);">Clear</span>
<svg class="a" style="left:1440.7px;top:136.5px;" width="7.05" height="4.75" viewBox="0 0 7.05 4.75"><path d="M1 1 L3.52 3.75 L6.05 1" fill="none" stroke="#3b3b3b" stroke-width="1.1" stroke-linecap="round" stroke-linejoin="round"/></svg>
<span class="t" style="left:1486.20px;top:101px;font-size:16.5px;line-height:16.5px;color:#3a7fd0;transform:scaleX(0.9623);">A</span>
<span class="t" style="left:1486.20px;top:117px;font-size:17px;line-height:17px;color:#3b3b3b;transform:scaleX(0.9239);">Z</span>
<svg class="a" style="left:1498.5px;top:108.5px;" width="19" height="19" viewBox="0 0 19 19"><path d="M1 1h16.500c0 2.800-3 4.300-6.200 7.500V17H7.500V8.500C4.300 5.300 1 3.800 1 1z" fill="none" stroke="#3b3b3b" stroke-width="1.150" stroke-linejoin="round"/></svg>
<span class="t" style="left:1482.70px;top:141px;font-size:12.6px;line-height:12.6px;color:#242424;transform:scaleX(1.0571);">Sort &amp;</span>
<span class="t" style="left:1482.30px;top:158px;font-size:12.6px;line-height:12.6px;color:#242424;transform:scaleX(0.9893);">Filter</span>
<svg class="a" style="left:1512.85px;top:161.7px;" width="7.2" height="4.75" viewBox="0 0 7.2 4.75"><path d="M1 1 L3.60 3.75 L6.20 1" fill="none" stroke="#3b3b3b" stroke-width="1.1" stroke-linecap="round" stroke-linejoin="round"/></svg>
<svg class="a" style="left:1530px;top:100px;" width="36" height="36" viewBox="0 0 36 36"><circle cx="21.400" cy="13" r="11.200" fill="none" stroke="#3b3b3b" stroke-width="1.150"/><path d="M13.400 21L1.800 32.500" stroke="#3b3b3b" stroke-width="1.150" stroke-linecap="round"/></svg>
<span class="t" style="left:1529.20px;top:141px;font-size:12.6px;line-height:12.6px;color:#242424;transform:scaleX(1.0273);">Find &amp;</span>
<span class="t" style="left:1525.60px;top:158px;font-size:12.6px;line-height:12.6px;color:#242424;transform:scaleX(0.9596);">Select</span>
<svg class="a" style="left:1561.75px;top:161.7px;" width="7.3" height="4.75" viewBox="0 0 7.3 4.75"><path d="M1 1 L3.65 3.75 L6.30 1" fill="none" stroke="#3b3b3b" stroke-width="1.1" stroke-linecap="round" stroke-linejoin="round"/></svg>
<span class="t" style="left:1458.00px;top:181px;font-size:11.5px;line-height:11.5px;color:#444;transform:scaleX(0.9240);">Editing</span>
<svg class="a" style="left:1600px;top:101px;" width="31" height="31" viewBox="0 0 31 31"><rect x="1.200" y="1.200" width="28.200" height="28.200" rx="4" fill="none" stroke="#c9553a" stroke-width="1.300"/><rect x="5.5" y="5.3" width="8" height="8" rx="1.500" fill="none" stroke="#c9553a" stroke-width="1.200"/><rect x="5.5" y="17" width="8" height="8" rx="1.500" fill="none" stroke="#c9553a" stroke-width="1.200"/><rect x="17" y="5.3" width="8" height="8" rx="1.500" fill="none" stroke="#c9553a" stroke-width="1.200"/><rect x="17" y="17" width="8" height="8" rx="1.500" fill="none" stroke="#c9553a" stroke-width="1.200"/></svg>
<span class="t" style="left:1593.60px;top:141px;font-size:12.6px;line-height:12.6px;color:#242424;transform:scaleX(1.0421);">Add-ins</span>
<svg class="a" style="left:1612.85px;top:161.6px;" width="7.2" height="4.75" viewBox="0 0 7.2 4.75"><path d="M1 1 L3.60 3.75 L6.20 1" fill="none" stroke="#3b3b3b" stroke-width="1.1" stroke-linecap="round" stroke-linejoin="round"/></svg>
<span class="t" style="left:1597.50px;top:181px;font-size:11.5px;line-height:11.5px;color:#444;transform:scaleX(0.9410);">Add-ins</span>
<svg class="a" style="left:1869.45px;top:182.3px;" width="11.1" height="6.45" viewBox="0 0 11.1 6.45"><path d="M1 1 L5.55 5.45 L10.10 1" fill="none" stroke="#3b3b3b" stroke-width="1.2" stroke-linecap="round" stroke-linejoin="round"/></svg>
<div class="a " style="left:25px;top:205px;width:134px;height:25px;background:#fff;border:1px solid #e6e6e6;"></div>
<span class="t" style="left:30.40px;top:212px;font-size:14px;line-height:14px;color:#242424;transform:scaleX(0.8991);">R1</span>
<svg class="a" style="left:146.45px;top:215.7px;" width="7.6" height="4.95" viewBox="0 0 7.6 4.95"><path d="M1 1 L3.80 3.95 L6.60 1" fill="none" stroke="#3b3b3b" stroke-width="1.1" stroke-linecap="round" stroke-linejoin="round"/></svg>
<div class="a " style="left:167px;top:205px;width:96.5px;height:25px;background:#fff;border:1px solid #e6e6e6;"></div>
<svg class="a" style="left:177px;top:210.5px;" width="14" height="14" viewBox="0 0 14 14"><path d="M1 1l12 12M13 1L1 13" stroke="#c2c2c2" stroke-width="1.100" stroke-linecap="round"/></svg>
<svg class="a" style="left:206px;top:210px;" width="19" height="14" viewBox="0 0 19 14"><path d="M1.500 8.500l5 5L17.500 1.500" fill="none" stroke="#c2c2c2" stroke-width="1.100" stroke-linecap="round" stroke-linejoin="round"/></svg>
<span class="t sf" style="left:240.80px;top:210px;font-size:15px;line-height:15px;font-style:italic;color:#3b3b3b;-webkit-text-stroke:0.3px #3b3b3b;transform:scaleX(1.1544);">fx</span>
<div class="a " style="left:267px;top:205px;width:1627.5px;height:25px;background:#fff;border:1px solid #e6e6e6;"></div>
<span class="t" style="left:271.00px;top:210px;font-size:14.5px;line-height:14.5px;color:#333;-webkit-text-stroke:0.25px #333;transform:scaleX(0.9441);">Postal Code 1</span>
<svg class="a" style="left:1881.45px;top:212.8px;" width="11.1" height="6.45" viewBox="0 0 11.1 6.45"><path d="M1 1 L5.55 5.45 L10.10 1" fill="none" stroke="#3b3b3b" stroke-width="1.2" stroke-linecap="round" stroke-linejoin="round"/></svg>
<div class="a " style="left:79px;top:277px;width:1455px;height:726px;background:#fff;"></div>
<div class="a " style="left:20px;top:277px;width:58px;height:726px;background:#cfe6d8;"></div>
<div class="a " style="left:1406px;top:305.27px;width:128px;height:697.73px;background:#e9efeb;"></div>
<div class="a " style="left:79px;top:305px;width:1455px;height:1px;background:#e7e7e7;"></div>
<div class="a " style="left:20px;top:305px;width:58px;height:1px;background:#c2dccb;"></div>
<div class="a " style="left:79px;top:334px;width:1455px;height:1px;background:#e7e7e7;"></div>
<div class="a " style="left:20px;top:334px;width:58px;height:1px;background:#c2dccb;"></div>
<div class="a " style="left:79px;top:362px;width:1455px;height:1px;background:#e7e7e7;"></div>
<div class="a " style="left:20px;top:362px;width:58px;height:1px;background:#c2dccb;"></div>
<div class="a " style="left:79px;top:390px;width:1455px;height:1px;background:#e7e7e7;"></div>
<div class="a " style="left:20px;top:390px;width:58px;height:1px;background:#c2dccb;"></div>
<div class="a " style="left:79px;top:418px;width:1455px;height:1px;background:#e7e7e7;"></div>
<div class="a " style="left:20px;top:418px;width:58px;height:1px;background:#c2dccb;"></div>
<div class="a " style="left:79px;top:447px;width:1455px;height:1px;background:#e7e7e7;"></div>
<div class="a " style="left:20px;top:447px;width:58px;height:1px;background:#c2dccb;"></div>
<div class="a " style="left:79px;top:475px;width:1455px;height:1px;background:#e7e7e7;"></div>
<div class="a " style="left:20px;top:475px;width:58px;height:1px;background:#c2dccb;"></div>
<div class="a " style="left:79px;top:503px;width:1455px;height:1px;background:#e7e7e7;"></div>
<div class="a " style="left:20px;top:503px;width:58px;height:1px;background:#c2dccb;"></div>
<div class="a " style="left:79px;top:531px;width:1455px;height:1px;background:#e7e7e7;"></div>
<div class="a " style="left:20px;top:531px;width:58px;height:1px;background:#c2dccb;"></div>
<div class="a " style="left:79px;top:560px;width:1455px;height:1px;background:#e7e7e7;"></div>
<div class="a " style="left:20px;top:560px;width:58px;height:1px;background:#c2dccb;"></div>
<div class="a " style="left:79px;top:588px;width:1455px;height:1px;background:#e7e7e7;"></div>
<div class="a " style="left:20px;top:588px;width:58px;height:1px;background:#c2dccb;"></div>
<div class="a " style="left:79px;top:616px;width:1455px;height:1px;background:#e7e7e7;"></div>
<div class="a " style="left:20px;top:616px;width:58px;height:1px;background:#c2dccb;"></div>
<div class="a " style="left:79px;top:645px;width:1455px;height:1px;background:#e7e7e7;"></div>
<div class="a " style="left:20px;top:645px;width:58px;height:1px;background:#c2dccb;"></div>
<div class="a " style="left:79px;top:673px;width:1455px;height:1px;background:#e7e7e7;"></div>
<div class="a " style="left:20px;top:673px;width:58px;height:1px;background:#c2dccb;"></div>
<div class="a " style="left:79px;top:701px;width:1455px;height:1px;background:#e7e7e7;"></div>
<div class="a " style="left:20px;top:701px;width:58px;height:1px;background:#c2dccb;"></div>
<div class="a " style="left:79px;top:729px;width:1455px;height:1px;background:#e7e7e7;"></div>
<div class="a " style="left:20px;top:729px;width:58px;height:1px;background:#c2dccb;"></div>
<div class="a " style="left:79px;top:758px;width:1455px;height:1px;background:#e7e7e7;"></div>
<div class="a " style="left:20px;top:758px;width:58px;height:1px;background:#c2dccb;"></div>
<div class="a " style="left:79px;top:786px;width:1455px;height:1px;background:#e7e7e7;"></div>
<div class="a " style="left:20px;top:786px;width:58px;height:1px;background:#c2dccb;"></div>
<div class="a " style="left:79px;top:814px;width:1455px;height:1px;background:#e7e7e7;"></div>
<div class="a " style="left:20px;top:814px;width:58px;height:1px;background:#c2dccb;"></div>
<div class="a " style="left:79px;top:842px;width:1455px;height:1px;background:#e7e7e7;"></div>
<div class="a " style="left:20px;top:842px;width:58px;height:1px;background:#c2dccb;"></div>
<div class="a " style="left:79px;top:871px;width:1455px;height:1px;background:#e7e7e7;"></div>
<div class="a " style="left:20px;top:871px;width:58px;height:1px;background:#c2dccb;"></div>
<div class="a " style="left:79px;top:899px;width:1455px;height:1px;background:#e7e7e7;"></div>
<div class="a " style="left:20px;top:899px;width:58px;height:1px;background:#c2dccb;"></div>
<div class="a " style="left:79px;top:927px;width:1455px;height:1px;background:#e7e7e7;"></div>
<div class="a " style="left:20px;top:927px;width:58px;height:1px;background:#c2dccb;"></div>
<div class="a " style="left:79px;top:955px;width:1455px;height:1px;background:#e7e7e7;"></div>
<div class="a " style="left:20px;top:955px;width:58px;height:1px;background:#c2dccb;"></div>
<div class="a " style="left:79px;top:984px;width:1455px;height:1px;background:#e7e7e7;"></div>
<div class="a " style="left:20px;top:984px;width:58px;height:1px;background:#c2dccb;"></div>
<div class="a " style="left:1408px;top:334px;width:126px;height:1px;background:#dfe6e2;"></div>
<div class="a " style="left:1408px;top:362px;width:126px;height:1px;background:#dfe6e2;"></div>
<div class="a " style="left:1408px;top:390px;width:126px;height:1px;background:#dfe6e2;"></div>
<div class="a " style="left:1408px;top:418px;width:126px;height:1px;background:#dfe6e2;"></div>
<div class="a " style="left:1408px;top:447px;width:126px;height:1px;background:#dfe6e2;"></div>
<div class="a " style="left:1408px;top:475px;width:126px;height:1px;background:#dfe6e2;"></div>
<div class="a " style="left:1408px;top:503px;width:126px;height:1px;background:#dfe6e2;"></div>
<div class="a " style="left:1408px;top:531px;width:126px;height:1px;background:#dfe6e2;"></div>
<div class="a " style="left:1408px;top:560px;width:126px;height:1px;background:#dfe6e2;"></div>
<div class="a " style="left:1408px;top:588px;width:126px;height:1px;background:#dfe6e2;"></div>
<div class="a " style="left:1408px;top:616px;width:126px;height:1px;background:#dfe6e2;"></div>
<div class="a " style="left:1408px;top:645px;width:126px;height:1px;background:#dfe6e2;"></div>
<div class="a " style="left:1408px;top:673px;width:126px;height:1px;background:#dfe6e2;"></div>
<div class="a " style="left:1408px;top:701px;width:126px;height:1px;background:#dfe6e2;"></div>
<div class="a " style="left:1408px;top:729px;width:126px;height:1px;background:#dfe6e2;"></div>
<div class="a " style="left:1408px;top:758px;width:126px;height:1px;background:#dfe6e2;"></div>
<div class="a " style="left:1408px;top:786px;width:126px;height:1px;background:#dfe6e2;"></div>
<div class="a " style="left:1408px;top:814px;width:126px;height:1px;background:#dfe6e2;"></div>
<div class="a " style="left:1408px;top:842px;width:126px;height:1px;background:#dfe6e2;"></div>
<div class="a " style="left:1408px;top:871px;width:126px;height:1px;background:#dfe6e2;"></div>
<div class="a " style="left:1408px;top:899px;width:126px;height:1px;background:#dfe6e2;"></div>
<div class="a " style="left:1408px;top:927px;width:126px;height:1px;background:#dfe6e2;"></div>
<div class="a " style="left:1408px;top:955px;width:126px;height:1px;background:#dfe6e2;"></div>
<div class="a " style="left:1408px;top:984px;width:126px;height:1px;background:#dfe6e2;"></div>
<div class="a " style="left:79px;top:277px;width:1px;height:726px;background:#e7e7e7;"></div>
<div class="a " style="left:79px;top:251px;width:1px;height:26px;background:#e3e3e3;"></div>
<div class="a " style="left:128px;top:277px;width:1px;height:726px;background:#e7e7e7;"></div>
<div class="a " style="left:128px;top:251px;width:1px;height:26px;background:#e3e3e3;"></div>
<div class="a " style="left:241px;top:277px;width:1px;height:726px;background:#e7e7e7;"></div>
<div class="a " style="left:241px;top:251px;width:1px;height:26px;background:#e3e3e3;"></div>
<div class="a " style="left:388px;top:277px;width:1px;height:726px;background:#e7e7e7;"></div>
<div class="a " style="left:388px;top:251px;width:1px;height:26px;background:#e3e3e3;"></div>
<div class="a " style="left:488px;top:277px;width:1px;height:726px;background:#e7e7e7;"></div>
<div class="a " style="left:488px;top:251px;width:1px;height:26px;background:#e3e3e3;"></div>
<div class="a " style="left:939px;top:277px;width:1px;height:726px;background:#e7e7e7;"></div>
<div class="a " style="left:939px;top:251px;width:1px;height:26px;background:#e3e3e3;"></div>
<div class="a " style="left:1095px;top:277px;width:1px;height:726px;background:#e7e7e7;"></div>
<div class="a " style="left:1095px;top:251px;width:1px;height:26px;background:#e3e3e3;"></div>
<div class="a " style="left:1252px;top:277px;width:1px;height:726px;background:#e7e7e7;"></div>
<div class="a " style="left:1252px;top:251px;width:1px;height:26px;background:#e3e3e3;"></div>
<div class="a " style="left:1406px;top:277px;width:1px;height:726px;background:#e7e7e7;"></div>
<div class="a " style="left:1406px;top:251px;width:1px;height:26px;background:#e3e3e3;"></div>
<div class="a " style="left:79px;top:277px;width:1455px;height:1px;background:#e0e0e0;"></div>
<div class="a " style="left:1405px;top:251px;width:129px;height:26px;background:#397d49;border-radius:2px 2px 0 0;"></div>
<div class="a " style="left:77px;top:275px;width:3px;height:728px;background:#397d49;"></div>
<div class="a " style="left:1405px;top:277px;width:3px;height:726px;background:#397d49;"></div>
<svg class="a" style="left:58px;top:255px;" width="18" height="18" viewBox="0 0 18 18"><path d="M17 0 L17 17 L0 17 Z" fill="#b5b5b5"/></svg>
<span class="t" style="left:179.70px;top:255px;font-size:18.5px;line-height:18.5px;color:#5f5f5f;transform:scaleX(0.9397);">K</span>
<span class="t" style="left:309.70px;top:255px;font-size:18.5px;line-height:18.5px;color:#5f5f5f;transform:scaleX(1.1266);">L</span>
<span class="t" style="left:433.20px;top:255px;font-size:18.5px;line-height:18.5px;color:#5f5f5f;transform:scaleX(0.7522);">M</span>
<span class="t" style="left:708.70px;top:255px;font-size:18.5px;line-height:18.5px;color:#5f5f5f;transform:scaleX(0.8673);">N</span>
<span class="t" style="left:1012.20px;top:255px;font-size:18.5px;line-height:18.5px;color:#5f5f5f;transform:scaleX(0.8061);">O</span>
<span class="t" style="left:1168.70px;top:255px;font-size:18.5px;line-height:18.5px;color:#5f5f5f;transform:scaleX(0.9397);">P</span>
<span class="t" style="left:1324.20px;top:255px;font-size:18.5px;line-height:18.5px;color:#5f5f5f;transform:scaleX(0.8061);">Q</span>
<span class="t" style="left:1464.70px;top:255px;font-size:18.5px;line-height:18.5px;font-weight:700;color:#fff;transform:scaleX(0.9421);">R</span>
<div class="a" style="left:0;top:0;width:1551px;height:1003px;overflow:hidden;">
<span class="t" style="left:131.00px;top:283px;font-size:18px;line-height:18px;color:#000;-webkit-text-stroke:0.15px #000;transform:scaleX(0.9516);">SSO User ID</span>
<span class="t" style="left:244.00px;top:283px;font-size:18px;line-height:18px;color:#000;-webkit-text-stroke:0.15px #000;transform:scaleX(1.0374);">Travel Arranger</span>
<span class="t" style="left:392.00px;top:283px;font-size:18px;line-height:18px;color:#000;-webkit-text-stroke:0.15px #000;transform:scaleX(1.0231);">Location 1</span>
<span class="t" style="left:492.00px;top:283px;font-size:18px;line-height:18px;color:#000;-webkit-text-stroke:0.15px #000;transform:scaleX(1.0295);">Street Address 1</span>
<span class="t" style="left:943.00px;top:283px;font-size:18px;line-height:18px;color:#000;-webkit-text-stroke:0.15px #000;transform:scaleX(1.1033);">Apt/Suite/Unit 1</span>
<span class="t" style="left:1098.00px;top:283px;font-size:18px;line-height:18px;color:#000;-webkit-text-stroke:0.15px #000;transform:scaleX(1.0866);">City 1</span>
<span class="t" style="left:1255.00px;top:283px;font-size:18px;line-height:18px;color:#000;-webkit-text-stroke:0.15px #000;transform:scaleX(1.0448);">State/Province 1</span>
<span class="t" style="left:1411.00px;top:283px;font-size:18px;line-height:18px;color:#000;-webkit-text-stroke:0.15px #000;transform:scaleX(0.9905);">Postal Code 1</span>
<span class="t" style="left:392.00px;top:312px;font-size:18px;line-height:18px;color:#000;-webkit-text-stroke:0.15px #000;transform:scaleX(1.0281);">Office</span>
<span class="t" style="left:492.50px;top:312px;font-size:18px;line-height:18px;color:#000;-webkit-text-stroke:0.15px #000;transform:scaleX(1.0163);">107 Kincaid Dr</span>
<span class="t" style="left:1098.00px;top:312px;font-size:18px;line-height:18px;color:#000;-webkit-text-stroke:0.15px #000;transform:scaleX(1.0167);">Toccoa</span>
<span class="t" style="left:1255.50px;top:312px;font-size:18px;line-height:18px;color:#000;-webkit-text-stroke:0.15px #000;transform:scaleX(0.9610);">GA</span>
<span class="t" style="left:1480.00px;top:312px;font-size:18px;line-height:18px;color:#000;-webkit-text-stroke:0.15px #000;transform:scaleX(1.0287);">30598</span>
<span class="t" style="left:392.00px;top:340px;font-size:18px;line-height:18px;color:#000;-webkit-text-stroke:0.15px #000;transform:scaleX(1.0281);">Office</span>
<span class="t" style="left:492.50px;top:340px;font-size:18px;line-height:18px;color:#000;-webkit-text-stroke:0.15px #000;transform:scaleX(1.0235);">77 Massachusetts Ave</span>
<span class="t" style="left:1098.00px;top:340px;font-size:18px;line-height:18px;color:#000;-webkit-text-stroke:0.15px #000;transform:scaleX(1.0392);">Cambridge</span>
<span class="t" style="left:1255.50px;top:340px;font-size:18px;line-height:18px;color:#000;-webkit-text-stroke:0.15px #000;transform:scaleX(1.1111);">MA</span>
<span class="t" style="left:1490.50px;top:340px;font-size:18px;line-height:18px;color:#000;-webkit-text-stroke:0.15px #000;transform:scaleX(1.0238);">2139</span>
<span class="t" style="left:392.00px;top:368px;font-size:18px;line-height:18px;color:#000;-webkit-text-stroke:0.15px #000;transform:scaleX(1.0568);">Dorm</span>
<span class="t" style="left:492.50px;top:368px;font-size:18px;line-height:18px;color:#000;-webkit-text-stroke:0.15px #000;transform:scaleX(1.0163);">109 Kincaid Dr</span>
<span class="t" style="left:1098.00px;top:368px;font-size:18px;line-height:18px;color:#000;-webkit-text-stroke:0.15px #000;transform:scaleX(1.0167);">Toccoa</span>
<span class="t" style="left:1255.50px;top:368px;font-size:18px;line-height:18px;color:#000;-webkit-text-stroke:0.15px #000;transform:scaleX(0.9610);">GA</span>
<span class="t" style="left:1480.00px;top:368px;font-size:18px;line-height:18px;color:#000;-webkit-text-stroke:0.15px #000;transform:scaleX(1.0287);">30598</span>
<span class="t" style="left:392.00px;top:396px;font-size:18px;line-height:18px;color:#000;-webkit-text-stroke:0.15px #000;transform:scaleX(1.0568);">Dorm</span>
<span class="t" style="left:492.50px;top:396px;font-size:18px;line-height:18px;color:#000;-webkit-text-stroke:0.15px #000;transform:scaleX(1.0163);">107 Kincaid Dr</span>
<span class="t" style="left:1098.00px;top:396px;font-size:18px;line-height:18px;color:#000;-webkit-text-stroke:0.15px #000;transform:scaleX(1.0167);">Toccoa</span>
<span class="t" style="left:1255.50px;top:396px;font-size:18px;line-height:18px;color:#000;-webkit-text-stroke:0.15px #000;transform:scaleX(0.9610);">GA</span>
<span class="t" style="left:1480.00px;top:396px;font-size:18px;line-height:18px;color:#000;-webkit-text-stroke:0.15px #000;transform:scaleX(1.0287);">30598</span>
<span class="t" style="left:392.00px;top:425px;font-size:18px;line-height:18px;color:#000;-webkit-text-stroke:0.15px #000;transform:scaleX(1.0281);">Office</span>
<span class="t" style="left:492.50px;top:425px;font-size:18px;line-height:18px;color:#000;-webkit-text-stroke:0.15px #000;transform:scaleX(1.0163);">107 Kincaid Dr</span>
<span class="t" style="left:1098.00px;top:425px;font-size:18px;line-height:18px;color:#000;-webkit-text-stroke:0.15px #000;transform:scaleX(1.0167);">Toccoa</span>
<span class="t" style="left:1255.50px;top:425px;font-size:18px;line-height:18px;color:#000;-webkit-text-stroke:0.15px #000;transform:scaleX(0.9610);">GA</span>
<span class="t" style="left:1480.00px;top:425px;font-size:18px;line-height:18px;color:#000;-webkit-text-stroke:0.15px #000;transform:scaleX(1.0287);">30598</span>
<span class="t" style="left:392.00px;top:453px;font-size:18px;line-height:18px;color:#000;-webkit-text-stroke:0.15px #000;transform:scaleX(1.0568);">Dorm</span>
<span class="t" style="left:492.50px;top:453px;font-size:18px;line-height:18px;color:#000;-webkit-text-stroke:0.15px #000;transform:scaleX(1.0163);">109 Kincaid Dr</span>
<span class="t" style="left:1098.00px;top:453px;font-size:18px;line-height:18px;color:#000;-webkit-text-stroke:0.15px #000;transform:scaleX(1.0167);">Toccoa</span>
<span class="t" style="left:1255.50px;top:453px;font-size:18px;line-height:18px;color:#000;-webkit-text-stroke:0.15px #000;transform:scaleX(0.9610);">GA</span>
<span class="t" style="left:1480.00px;top:453px;font-size:18px;line-height:18px;color:#000;-webkit-text-stroke:0.15px #000;transform:scaleX(1.0287);">30598</span>
<span class="t" style="left:392.00px;top:481px;font-size:18px;line-height:18px;color:#000;-webkit-text-stroke:0.15px #000;transform:scaleX(1.0568);">Dorm</span>
<span class="t" style="left:492.50px;top:481px;font-size:18px;line-height:18px;color:#000;-webkit-text-stroke:0.15px #000;transform:scaleX(1.0163);">109 Kincaid Dr</span>
<span class="t" style="left:1098.00px;top:481px;font-size:18px;line-height:18px;color:#000;-webkit-text-stroke:0.15px #000;transform:scaleX(1.0167);">Toccoa</span>
<span class="t" style="left:1255.50px;top:481px;font-size:18px;line-height:18px;color:#000;-webkit-text-stroke:0.15px #000;transform:scaleX(0.9610);">GA</span>
<span class="t" style="left:1480.00px;top:481px;font-size:18px;line-height:18px;color:#000;-webkit-text-stroke:0.15px #000;transform:scaleX(1.0287);">30598</span>
<span class="t" style="left:392.00px;top:510px;font-size:18px;line-height:18px;color:#000;-webkit-text-stroke:0.15px #000;transform:scaleX(1.0568);">Dorm</span>
<span class="t" style="left:492.50px;top:510px;font-size:18px;line-height:18px;color:#000;-webkit-text-stroke:0.15px #000;transform:scaleX(1.0280);">110 Kincaid Dr</span>
<span class="t" style="left:1098.00px;top:510px;font-size:18px;line-height:18px;color:#000;-webkit-text-stroke:0.15px #000;transform:scaleX(1.0167);">Toccoa</span>
<span class="t" style="left:1255.50px;top:510px;font-size:18px;line-height:18px;color:#000;-webkit-text-stroke:0.15px #000;transform:scaleX(0.9610);">GA</span>
<span class="t" style="left:1480.00px;top:510px;font-size:18px;line-height:18px;color:#000;-webkit-text-stroke:0.15px #000;transform:scaleX(1.0287);">30598</span>
<span class="t" style="left:392.00px;top:538px;font-size:18px;line-height:18px;color:#000;-webkit-text-stroke:0.15px #000;transform:scaleX(1.0281);">Office</span>
<span class="t" style="left:492.50px;top:538px;font-size:18px;line-height:18px;color:#000;-webkit-text-stroke:0.15px #000;transform:scaleX(1.0163);">107 Kincaid Dr</span>
<span class="t" style="left:1098.00px;top:538px;font-size:18px;line-height:18px;color:#000;-webkit-text-stroke:0.15px #000;transform:scaleX(1.0167);">Toccoa</span>
<span class="t" style="left:1255.50px;top:538px;font-size:18px;line-height:18px;color:#000;-webkit-text-stroke:0.15px #000;transform:scaleX(0.9610);">GA</span>
<span class="t" style="left:1480.00px;top:538px;font-size:18px;line-height:18px;color:#000;-webkit-text-stroke:0.15px #000;transform:scaleX(1.0287);">30598</span>
<span class="t" style="left:392.00px;top:566px;font-size:18px;line-height:18px;color:#000;-webkit-text-stroke:0.15px #000;transform:scaleX(1.0568);">Dorm</span>
<span class="t" style="left:492.50px;top:566px;font-size:18px;line-height:18px;color:#000;-webkit-text-stroke:0.15px #000;transform:scaleX(1.0163);">108 Kincaid Dr</span>
<span class="t" style="left:1098.00px;top:566px;font-size:18px;line-height:18px;color:#000;-webkit-text-stroke:0.15px #000;transform:scaleX(1.0167);">Toccoa</span>
<span class="t" style="left:1255.50px;top:566px;font-size:18px;line-height:18px;color:#000;-webkit-text-stroke:0.15px #000;transform:scaleX(0.9610);">GA</span>
<span class="t" style="left:1480.00px;top:566px;font-size:18px;line-height:18px;color:#000;-webkit-text-stroke:0.15px #000;transform:scaleX(1.0287);">30598</span>
<span class="t" style="left:392.00px;top:594px;font-size:18px;line-height:18px;color:#000;-webkit-text-stroke:0.15px #000;transform:scaleX(1.0281);">Office</span>
<span class="t" style="left:492.50px;top:594px;font-size:18px;line-height:18px;color:#000;-webkit-text-stroke:0.15px #000;transform:scaleX(1.0163);">107 Kincaid Dr</span>
<span class="t" style="left:1098.00px;top:594px;font-size:18px;line-height:18px;color:#000;-webkit-text-stroke:0.15px #000;transform:scaleX(1.0167);">Toccoa</span>
<span class="t" style="left:1255.50px;top:594px;font-size:18px;line-height:18px;color:#000;-webkit-text-stroke:0.15px #000;transform:scaleX(0.9610);">GA</span>
<span class="t" style="left:1480.00px;top:594px;font-size:18px;line-height:18px;color:#000;-webkit-text-stroke:0.15px #000;transform:scaleX(1.0287);">30598</span>
<span class="t" style="left:392.00px;top:623px;font-size:18px;line-height:18px;color:#000;-webkit-text-stroke:0.15px #000;transform:scaleX(1.0568);">Dorm</span>
<span class="t" style="left:492.50px;top:623px;font-size:18px;line-height:18px;color:#000;-webkit-text-stroke:0.15px #000;transform:scaleX(1.0163);">109 Kincaid Dr</span>
<span class="t" style="left:1098.00px;top:623px;font-size:18px;line-height:18px;color:#000;-webkit-text-stroke:0.15px #000;transform:scaleX(1.0167);">Toccoa</span>
<span class="t" style="left:1255.50px;top:623px;font-size:18px;line-height:18px;color:#000;-webkit-text-stroke:0.15px #000;transform:scaleX(0.9610);">GA</span>
<span class="t" style="left:1480.00px;top:623px;font-size:18px;line-height:18px;color:#000;-webkit-text-stroke:0.15px #000;transform:scaleX(1.0287);">30598</span>
<span class="t" style="left:392.00px;top:651px;font-size:18px;line-height:18px;color:#000;-webkit-text-stroke:0.15px #000;transform:scaleX(1.0281);">Office</span>
<span class="t" style="left:492.50px;top:651px;font-size:18px;line-height:18px;color:#000;-webkit-text-stroke:0.15px #000;transform:scaleX(1.0163);">107 Kincaid Dr</span>
<span class="t" style="left:1098.00px;top:651px;font-size:18px;line-height:18px;color:#000;-webkit-text-stroke:0.15px #000;transform:scaleX(1.0167);">Toccoa</span>
<span class="t" style="left:1255.50px;top:651px;font-size:18px;line-height:18px;color:#000;-webkit-text-stroke:0.15px #000;transform:scaleX(0.9610);">GA</span>
<span class="t" style="left:1480.00px;top:651px;font-size:18px;line-height:18px;color:#000;-webkit-text-stroke:0.15px #000;transform:scaleX(1.0287);">30598</span>
<span class="t" style="left:392.00px;top:679px;font-size:18px;line-height:18px;color:#000;-webkit-text-stroke:0.15px #000;transform:scaleX(1.0568);">Dorm</span>
<span class="t" style="left:492.50px;top:679px;font-size:18px;line-height:18px;color:#000;-webkit-text-stroke:0.15px #000;transform:scaleX(1.0163);">109 Kincaid Dr</span>
<span class="t" style="left:1098.00px;top:679px;font-size:18px;line-height:18px;color:#000;-webkit-text-stroke:0.15px #000;transform:scaleX(1.0167);">Toccoa</span>
<span class="t" style="left:1255.50px;top:679px;font-size:18px;line-height:18px;color:#000;-webkit-text-stroke:0.15px #000;transform:scaleX(0.9610);">GA</span>
<span class="t" style="left:1480.00px;top:679px;font-size:18px;line-height:18px;color:#000;-webkit-text-stroke:0.15px #000;transform:scaleX(1.0287);">30598</span>
<span class="t" style="left:392.00px;top:707px;font-size:18px;line-height:18px;color:#000;-webkit-text-stroke:0.15px #000;transform:scaleX(1.0568);">Dorm</span>
<span class="t" style="left:492.50px;top:707px;font-size:18px;line-height:18px;color:#000;-webkit-text-stroke:0.15px #000;transform:scaleX(1.0163);">107 Kincaid Dr</span>
<span class="t" style="left:1098.00px;top:707px;font-size:18px;line-height:18px;color:#000;-webkit-text-stroke:0.15px #000;transform:scaleX(1.0167);">Toccoa</span>
<span class="t" style="left:1255.50px;top:707px;font-size:18px;line-height:18px;color:#000;-webkit-text-stroke:0.15px #000;transform:scaleX(0.9610);">GA</span>
<span class="t" style="left:1480.00px;top:707px;font-size:18px;line-height:18px;color:#000;-webkit-text-stroke:0.15px #000;transform:scaleX(1.0287);">30598</span>
<span class="t" style="left:392.00px;top:736px;font-size:18px;line-height:18px;color:#000;-webkit-text-stroke:0.15px #000;transform:scaleX(1.0568);">Dorm</span>
<span class="t" style="left:492.50px;top:736px;font-size:18px;line-height:18px;color:#000;-webkit-text-stroke:0.15px #000;transform:scaleX(1.0163);">107 Kincaid Dr</span>
<span class="t" style="left:1098.00px;top:736px;font-size:18px;line-height:18px;color:#000;-webkit-text-stroke:0.15px #000;transform:scaleX(1.0167);">Toccoa</span>
<span class="t" style="left:1255.50px;top:736px;font-size:18px;line-height:18px;color:#000;-webkit-text-stroke:0.15px #000;transform:scaleX(0.9610);">GA</span>
<span class="t" style="left:1480.00px;top:736px;font-size:18px;line-height:18px;color:#000;-webkit-text-stroke:0.15px #000;transform:scaleX(1.0287);">30598</span>
<span class="t" style="left:392.00px;top:764px;font-size:18px;line-height:18px;color:#000;-webkit-text-stroke:0.15px #000;transform:scaleX(1.0568);">Dorm</span>
<span class="t" style="left:492.50px;top:764px;font-size:18px;line-height:18px;color:#000;-webkit-text-stroke:0.15px #000;transform:scaleX(1.0163);">108 Kincaid Dr</span>
<span class="t" style="left:1098.00px;top:764px;font-size:18px;line-height:18px;color:#000;-webkit-text-stroke:0.15px #000;transform:scaleX(1.0167);">Toccoa</span>
<span class="t" style="left:1255.50px;top:764px;font-size:18px;line-height:18px;color:#000;-webkit-text-stroke:0.15px #000;transform:scaleX(0.9610);">GA</span>
<span class="t" style="left:1480.00px;top:764px;font-size:18px;line-height:18px;color:#000;-webkit-text-stroke:0.15px #000;transform:scaleX(1.0287);">30598</span>
<span class="t" style="left:392.00px;top:792px;font-size:18px;line-height:18px;color:#000;-webkit-text-stroke:0.15px #000;transform:scaleX(1.0568);">Dorm</span>
<span class="t" style="left:492.50px;top:792px;font-size:18px;line-height:18px;color:#000;-webkit-text-stroke:0.15px #000;transform:scaleX(1.0280);">110 Kincaid Dr</span>
<span class="t" style="left:1098.00px;top:792px;font-size:18px;line-height:18px;color:#000;-webkit-text-stroke:0.15px #000;transform:scaleX(1.0167);">Toccoa</span>
<span class="t" style="left:1255.50px;top:792px;font-size:18px;line-height:18px;color:#000;-webkit-text-stroke:0.15px #000;transform:scaleX(0.9610);">GA</span>
<span class="t" style="left:1480.00px;top:792px;font-size:18px;line-height:18px;color:#000;-webkit-text-stroke:0.15px #000;transform:scaleX(1.0287);">30598</span>
<span class="t" style="left:392.00px;top:821px;font-size:18px;line-height:18px;color:#000;-webkit-text-stroke:0.15px #000;transform:scaleX(1.0281);">Office</span>
<span class="t" style="left:492.50px;top:821px;font-size:18px;line-height:18px;color:#000;-webkit-text-stroke:0.15px #000;transform:scaleX(1.0163);">107 Kincaid Dr</span>
<span class="t" style="left:1098.00px;top:821px;font-size:18px;line-height:18px;color:#000;-webkit-text-stroke:0.15px #000;transform:scaleX(1.0167);">Toccoa</span>
<span class="t" style="left:1255.50px;top:821px;font-size:18px;line-height:18px;color:#000;-webkit-text-stroke:0.15px #000;transform:scaleX(0.9610);">GA</span>
<span class="t" style="left:1480.00px;top:821px;font-size:18px;line-height:18px;color:#000;-webkit-text-stroke:0.15px #000;transform:scaleX(1.0287);">30598</span>
<span class="t" style="left:392.00px;top:849px;font-size:18px;line-height:18px;color:#000;-webkit-text-stroke:0.15px #000;transform:scaleX(1.0568);">Dorm</span>
<span class="t" style="left:492.50px;top:849px;font-size:18px;line-height:18px;color:#000;-webkit-text-stroke:0.15px #000;transform:scaleX(1.0163);">109 Kincaid Dr</span>
<span class="t" style="left:1098.00px;top:849px;font-size:18px;line-height:18px;color:#000;-webkit-text-stroke:0.15px #000;transform:scaleX(1.0167);">Toccoa</span>
<span class="t" style="left:1255.50px;top:849px;font-size:18px;line-height:18px;color:#000;-webkit-text-stroke:0.15px #000;transform:scaleX(0.9610);">GA</span>
<span class="t" style="left:1480.00px;top:849px;font-size:18px;line-height:18px;color:#000;-webkit-text-stroke:0.15px #000;transform:scaleX(1.0287);">30598</span>
<span class="t" style="left:392.00px;top:877px;font-size:18px;line-height:18px;color:#000;-webkit-text-stroke:0.15px #000;transform:scaleX(1.0568);">Dorm</span>
<span class="t" style="left:492.50px;top:877px;font-size:18px;line-height:18px;color:#000;-webkit-text-stroke:0.15px #000;transform:scaleX(1.0280);">110 Kincaid Dr</span>
<span class="t" style="left:1098.00px;top:877px;font-size:18px;line-height:18px;color:#000;-webkit-text-stroke:0.15px #000;transform:scaleX(1.0167);">Toccoa</span>
<span class="t" style="left:1255.50px;top:877px;font-size:18px;line-height:18px;color:#000;-webkit-text-stroke:0.15px #000;transform:scaleX(0.9610);">GA</span>
<span class="t" style="left:1480.00px;top:877px;font-size:18px;line-height:18px;color:#000;-webkit-text-stroke:0.15px #000;transform:scaleX(1.0287);">30598</span>
<span class="t" style="left:392.00px;top:905px;font-size:18px;line-height:18px;color:#000;-webkit-text-stroke:0.15px #000;transform:scaleX(1.0568);">Dorm</span>
<span class="t" style="left:492.50px;top:905px;font-size:18px;line-height:18px;color:#000;-webkit-text-stroke:0.15px #000;transform:scaleX(1.0163);">109 Kincaid Dr</span>
<span class="t" style="left:1098.00px;top:905px;font-size:18px;line-height:18px;color:#000;-webkit-text-stroke:0.15px #000;transform:scaleX(1.0167);">Toccoa</span>
<span class="t" style="left:1255.50px;top:905px;font-size:18px;line-height:18px;color:#000;-webkit-text-stroke:0.15px #000;transform:scaleX(0.9610);">GA</span>
<span class="t" style="left:1480.00px;top:905px;font-size:18px;line-height:18px;color:#000;-webkit-text-stroke:0.15px #000;transform:scaleX(1.0287);">30598</span>
<span class="t" style="left:392.00px;top:934px;font-size:18px;line-height:18px;color:#000;-webkit-text-stroke:0.15px #000;transform:scaleX(1.0281);">Office</span>
<span class="t" style="left:492.50px;top:934px;font-size:18px;line-height:18px;color:#000;-webkit-text-stroke:0.15px #000;transform:scaleX(1.0163);">107 Kincaid Dr</span>
<span class="t" style="left:1098.00px;top:934px;font-size:18px;line-height:18px;color:#000;-webkit-text-stroke:0.15px #000;transform:scaleX(1.0167);">Toccoa</span>
<span class="t" style="left:1255.50px;top:934px;font-size:18px;line-height:18px;color:#000;-webkit-text-stroke:0.15px #000;transform:scaleX(0.9610);">GA</span>
<span class="t" style="left:1480.00px;top:934px;font-size:18px;line-height:18px;color:#000;-webkit-text-stroke:0.15px #000;transform:scaleX(1.0287);">30598</span>
<span class="t" style="left:392.00px;top:962px;font-size:18px;line-height:18px;color:#000;-webkit-text-stroke:0.15px #000;transform:scaleX(1.0568);">Dorm</span>
<span class="t" style="left:492.50px;top:962px;font-size:18px;line-height:18px;color:#000;-webkit-text-stroke:0.15px #000;transform:scaleX(1.0163);">109 Kincaid Dr</span>
<span class="t" style="left:1098.00px;top:962px;font-size:18px;line-height:18px;color:#000;-webkit-text-stroke:0.15px #000;transform:scaleX(1.0167);">Toccoa</span>
<span class="t" style="left:1255.50px;top:962px;font-size:18px;line-height:18px;color:#000;-webkit-text-stroke:0.15px #000;transform:scaleX(0.9610);">GA</span>
<span class="t" style="left:1480.00px;top:962px;font-size:18px;line-height:18px;color:#000;-webkit-text-stroke:0.15px #000;transform:scaleX(1.0287);">30598</span>
<span class="t" style="left:392.00px;top:990px;font-size:18px;line-height:18px;color:#000;-webkit-text-stroke:0.15px #000;transform:scaleX(1.0281);">Office</span>
<span class="t" style="left:492.50px;top:990px;font-size:18px;line-height:18px;color:#000;-webkit-text-stroke:0.15px #000;transform:scaleX(1.0163);">107 Kincaid Dr</span>
<span class="t" style="left:1098.00px;top:990px;font-size:18px;line-height:18px;color:#000;-webkit-text-stroke:0.15px #000;transform:scaleX(1.0167);">Toccoa</span>
<span class="t" style="left:1255.50px;top:990px;font-size:18px;line-height:18px;color:#000;-webkit-text-stroke:0.15px #000;transform:scaleX(0.9610);">GA</span>
<span class="t" style="left:1480.00px;top:990px;font-size:18px;line-height:18px;color:#000;-webkit-text-stroke:0.15px #000;transform:scaleX(1.0287);">30598</span>
<span class="t" style="left:63.50px;top:283px;font-size:18px;line-height:18px;color:#2f7a45;-webkit-text-stroke:0.2px #2f7a45;transform:scaleX(1.0484);">1</span>
<span class="t" style="left:63.50px;top:312px;font-size:18px;line-height:18px;color:#2f7a45;-webkit-text-stroke:0.2px #2f7a45;transform:scaleX(1.0484);">2</span>
<span class="t" style="left:63.50px;top:340px;font-size:18px;line-height:18px;color:#2f7a45;-webkit-text-stroke:0.2px #2f7a45;transform:scaleX(1.0484);">3</span>
<span class="t" style="left:63.50px;top:368px;font-size:18px;line-height:18px;color:#2f7a45;-webkit-text-stroke:0.2px #2f7a45;transform:scaleX(1.0484);">4</span>
<span class="t" style="left:63.50px;top:396px;font-size:18px;line-height:18px;color:#2f7a45;-webkit-text-stroke:0.2px #2f7a45;transform:scaleX(1.0484);">5</span>
<span class="t" style="left:63.50px;top:425px;font-size:18px;line-height:18px;color:#2f7a45;-webkit-text-stroke:0.2px #2f7a45;transform:scaleX(1.0484);">6</span>
<span class="t" style="left:63.50px;top:453px;font-size:18px;line-height:18px;color:#2f7a45;-webkit-text-stroke:0.2px #2f7a45;transform:scaleX(1.0484);">7</span>
<span class="t" style="left:63.50px;top:481px;font-size:18px;line-height:18px;color:#2f7a45;-webkit-text-stroke:0.2px #2f7a45;transform:scaleX(1.0484);">8</span>
<span class="t" style="left:63.50px;top:510px;font-size:18px;line-height:18px;color:#2f7a45;-webkit-text-stroke:0.2px #2f7a45;transform:scaleX(1.0484);">9</span>
<span class="t" style="left:53.00px;top:538px;font-size:18px;line-height:18px;color:#2f7a45;-webkit-text-stroke:0.2px #2f7a45;transform:scaleX(1.0484);">10</span>
<span class="t" style="left:53.00px;top:566px;font-size:18px;line-height:18px;color:#2f7a45;-webkit-text-stroke:0.2px #2f7a45;transform:scaleX(1.1237);">11</span>
<span class="t" style="left:53.00px;top:594px;font-size:18px;line-height:18px;color:#2f7a45;-webkit-text-stroke:0.2px #2f7a45;transform:scaleX(1.0484);">12</span>
<span class="t" style="left:53.00px;top:623px;font-size:18px;line-height:18px;color:#2f7a45;-webkit-text-stroke:0.2px #2f7a45;transform:scaleX(1.0484);">13</span>
<span class="t" style="left:53.00px;top:651px;font-size:18px;line-height:18px;color:#2f7a45;-webkit-text-stroke:0.2px #2f7a45;transform:scaleX(1.0484);">14</span>
<span class="t" style="left:53.00px;top:679px;font-size:18px;line-height:18px;color:#2f7a45;-webkit-text-stroke:0.2px #2f7a45;transform:scaleX(1.0484);">15</span>
<span class="t" style="left:53.00px;top:707px;font-size:18px;line-height:18px;color:#2f7a45;-webkit-text-stroke:0.2px #2f7a45;transform:scaleX(1.0484);">16</span>
<span class="t" style="left:53.00px;top:736px;font-size:18px;line-height:18px;color:#2f7a45;-webkit-text-stroke:0.2px #2f7a45;transform:scaleX(1.0484);">17</span>
<span class="t" style="left:53.00px;top:764px;font-size:18px;line-height:18px;color:#2f7a45;-webkit-text-stroke:0.2px #2f7a45;transform:scaleX(1.0484);">18</span>
<span class="t" style="left:53.00px;top:792px;font-size:18px;line-height:18px;color:#2f7a45;-webkit-text-stroke:0.2px #2f7a45;transform:scaleX(1.0484);">19</span>
<span class="t" style="left:53.00px;top:821px;font-size:18px;line-height:18px;color:#2f7a45;-webkit-text-stroke:0.2px #2f7a45;transform:scaleX(1.0484);">20</span>
<span class="t" style="left:53.00px;top:849px;font-size:18px;line-height:18px;color:#2f7a45;-webkit-text-stroke:0.2px #2f7a45;transform:scaleX(1.0484);">21</span>
<span class="t" style="left:53.00px;top:877px;font-size:18px;line-height:18px;color:#2f7a45;-webkit-text-stroke:0.2px #2f7a45;transform:scaleX(1.0484);">22</span>
<span class="t" style="left:53.00px;top:905px;font-size:18px;line-height:18px;color:#2f7a45;-webkit-text-stroke:0.2px #2f7a45;transform:scaleX(1.0484);">23</span>
<span class="t" style="left:53.00px;top:934px;font-size:18px;line-height:18px;color:#2f7a45;-webkit-text-stroke:0.2px #2f7a45;transform:scaleX(1.0484);">24</span>
<span class="t" style="left:53.00px;top:962px;font-size:18px;line-height:18px;color:#2f7a45;-webkit-text-stroke:0.2px #2f7a45;transform:scaleX(1.0484);">25</span>
<span class="t" style="left:53.00px;top:990px;font-size:18px;line-height:18px;color:#2f7a45;-webkit-text-stroke:0.2px #2f7a45;transform:scaleX(1.0484);">26</span>
</div>
<div class="a " style="left:20px;top:1003px;width:1531px;height:16px;background:#f5f5f5;"></div>
<div class="a " style="left:1534px;top:277px;width:16px;height:726px;background:#fafafa;"></div>
<div class="a " style="left:1538.5px;top:277.5px;width:8.5px;height:11px;background:#c4c4c4;border-radius:4.2px;"></div>
<div class="a " style="left:80px;top:1004px;width:1470px;height:15px;background:#fafafa;"></div>
<div class="a " style="left:197px;top:1008px;width:80px;height:8.5px;background:#c2c2c2;border-radius:4.5px;"></div>
<div class="a " style="left:1550px;top:236px;width:1px;height:820px;background:#e3e3e3;"></div>
<svg class="a" style="left:1574px;top:258px;" width="16" height="14" viewBox="0 0 16 14"><path d="M14.500 7H1.500M7 1.300L1.300 7 7 12.700" fill="none" stroke="#424242" stroke-width="1.200" stroke-linecap="round" stroke-linejoin="round"/></svg>
<span class="t" style="left:1604.30px;top:257px;font-size:16.5px;line-height:16.5px;color:#242424;-webkit-text-stroke:0.45px #242424;transform:scaleX(1.1371);">All formatting options</span>
<svg class="a" style="left:1862.5px;top:259px;" width="13" height="13" viewBox="0 0 13 13"><path d="M1 1l11 11M12 1L1 12" stroke="#242424" stroke-width="1.300" stroke-linecap="round"/></svg>
<span class="t" style="left:1571.90px;top:302px;font-size:14.5px;line-height:14.5px;color:#242424;-webkit-text-stroke:0.4px #242424;transform:scaleX(1.0799);">Number</span>
<div class="a " style="left:1572px;top:318.5px;width:54.7px;height:2.3px;background:#397d49;border-radius:1px;"></div>
<span class="t" style="left:1645.40px;top:302px;font-size:14.5px;line-height:14.5px;color:#424242;transform:scaleX(1.0700);">Alignment</span>
<span class="t" style="left:1570.60px;top:349px;font-size:13.5px;line-height:13.5px;color:#333;-webkit-text-stroke:0.35px #333;transform:scaleX(0.9580);">Choose Category</span>
<div class="a " style="left:1570px;top:374px;width:311.3px;height:44.5px;background:#fff;border-radius:6px;box-shadow:0 1px 3px rgba(0,0,0,.16),0 0 2px rgba(0,0,0,.08);"></div>
<svg class="a" style="left:1579px;top:389.7px;" width="20" height="20" viewBox="0 0 20 20"><path d="M12.900 8.500A5.900 5.900 0 1 0 2.600 10.400" fill="none" stroke="#3f88d4" stroke-width="1.250" stroke-linecap="round"/><path d="M6.600 3.300V6.600H9" fill="none" stroke="#555" stroke-width="1.200" stroke-linecap="round" stroke-linejoin="round"/></svg>
<span class="t" style="left:1583.10px;top:399px;font-size:10.5px;line-height:10.5px;color:#4a4a4a;transform:scaleX(0.8214);">123</span>
<span class="t" style="left:1606.60px;top:391px;font-size:15px;line-height:15px;color:#242424;-webkit-text-stroke:0.4px #242424;transform:scaleX(0.9724);">General</span>
<svg class="a" style="left:1866.65px;top:392.8px;" width="10.9" height="6.75" viewBox="0 0 10.9 6.75"><path d="M1 1 L5.45 5.75 L9.90 1" fill="none" stroke="#242424" stroke-width="1.2" stroke-linecap="round" stroke-linejoin="round"/></svg>
<svg class="a" style="left:1570.5px;top:432px;" width="10" height="10" viewBox="0 0 10 10"><circle cx="5" cy="5" r="3.900" fill="none" stroke="#616161" stroke-width="0.900"/><path d="M5 4.500v2.600" stroke="#616161" stroke-width="0.900"/><circle cx="5" cy="3.100" r="0.550" fill="#616161"/></svg>
<span class="t" style="left:1590.00px;top:430px;font-size:12.5px;line-height:12.5px;color:#555;transform:scaleX(1.0311);">Displays values by default with no specific</span>
<span class="t" style="left:1590.00px;top:447px;font-size:12.5px;line-height:12.5px;color:#555;transform:scaleX(1.0838);">formatting</span>
<svg class="a" style="left:1562px;top:1024px;" width="19" height="18" viewBox="0 0 19 18"><circle cx="5.700" cy="7.300" r="2.700" fill="none" stroke="#424242" stroke-width="1.050"/><path d="M1 16.500c.3-3 2-4.600 4.700-4.600s4.400 1.600 4.700 4.600" fill="none" stroke="#424242" stroke-width="1.050" stroke-linecap="round"/><path d="M7.300 1.200h10.200v7.800h-5.300l-2.200 2v-2" fill="none" stroke="#424242" stroke-width="1.050" stroke-linejoin="round" stroke-linecap="round"/></svg>
<span class="t" style="left:1591.50px;top:1027px;font-size:13px;line-height:13px;color:#424242;transform:scaleX(1.0135);">Help Improve Formatting</span>
<svg class="a" style="left:33px;top:1031px;" width="9" height="12" viewBox="0 0 9 12"><path d="M7 1L1.800 6 7 11" fill="none" stroke="#c0c0c0" stroke-width="1.200" stroke-linecap="round" stroke-linejoin="round"/></svg>
<svg class="a" style="left:68px;top:1031px;" width="9" height="12" viewBox="0 0 9 12"><path d="M2 1l5.200 5L2 11" fill="none" stroke="#c0c0c0" stroke-width="1.200" stroke-linecap="round" stroke-linejoin="round"/></svg>
<div class="a " style="left:100.6px;top:1031.9px;width:13.2px;height:1.2px;background:#424242;"></div>
<div class="a " style="left:100.6px;top:1036.4px;width:13.2px;height:1.2px;background:#424242;"></div>
<div class="a " style="left:100.6px;top:1040.9px;width:13.2px;height:1.2px;background:#424242;"></div>
<span class="t" style="left:135.00px;top:1028px;font-size:15.5px;line-height:15.5px;color:#3b3b3b;-webkit-text-stroke:0.3px #3b3b3b;transform:scaleX(0.9107);">in</span>
<div class="a " style="left:135px;top:1052px;width:11.7px;height:3.2px;background:#397d49;"></div>
<svg class="a" style="left:166px;top:1030px;" width="14" height="14" viewBox="0 0 14 14"><path d="M7 1v12M1 7h12" stroke="#424242" stroke-width="1.200" stroke-linecap="round"/></svg>
<div class="a " style="left:20px;top:1055px;width:1880px;height:25px;background:#fff;border-top:1px solid #e0e0e0;"></div>
<span class="t" style="left:55.60px;top:1063px;font-size:12px;line-height:12px;color:#424242;transform:scaleX(0.9842);">Workbook Statistics</span>
<span class="t" style="left:1260.00px;top:1063px;font-size:12px;line-height:12px;color:#424242;transform:scaleX(0.9776);">Average: 30622.00506</span>
<span class="t" style="left:1394.00px;top:1063px;font-size:12px;line-height:12px;color:#424242;transform:scaleX(0.9864);">Count: 2571</span>
<span class="t" style="left:1473.50px;top:1063px;font-size:12px;line-height:12px;color:#424242;transform:scaleX(0.9736);">Sum: 78698553</span>
<svg class="a" style="left:1571.65px;top:1066.1px;" width="7.7" height="4.95" viewBox="0 0 7.7 4.95"><path d="M1 1 L3.85 3.95 L6.70 1" fill="none" stroke="#424242" stroke-width="1.4" stroke-linecap="round" stroke-linejoin="round"/></svg>
<span class="t" style="left:1623.00px;top:1063px;font-size:12px;line-height:12px;color:#424242;transform:scaleX(0.9859);">Give Feedback to Microsoft</span>
<div class="a " style="left:1806px;top:1068px;width:12px;height:1.2px;background:#424242;"></div>
<span class="t" style="left:1833.00px;top:1063px;font-size:12px;line-height:12px;color:#424242;transform:scaleX(0.9120);">130%</span>
<svg class="a" style="left:1873px;top:1062px;" width="14" height="14" viewBox="0 0 14 14"><path d="M7 1v12M1 7h12" stroke="#424242" stroke-width="1.200" stroke-linecap="round"/></svg>
<svg class="a" style="left:1660px;top:180px;" width="240" height="240" viewBox="0 0 240 240"><g fill="none" stroke="#b0182b" stroke-width="14.200" stroke-linecap="round" stroke-linejoin="round"><path d="M37.100 24.300 C 89.900 44.300, 136.200 75.100, 129 204"/><path d="M92.900 169 L128.900 204.700 L163.800 168.700"/></g></svg>
</div></body></html>
